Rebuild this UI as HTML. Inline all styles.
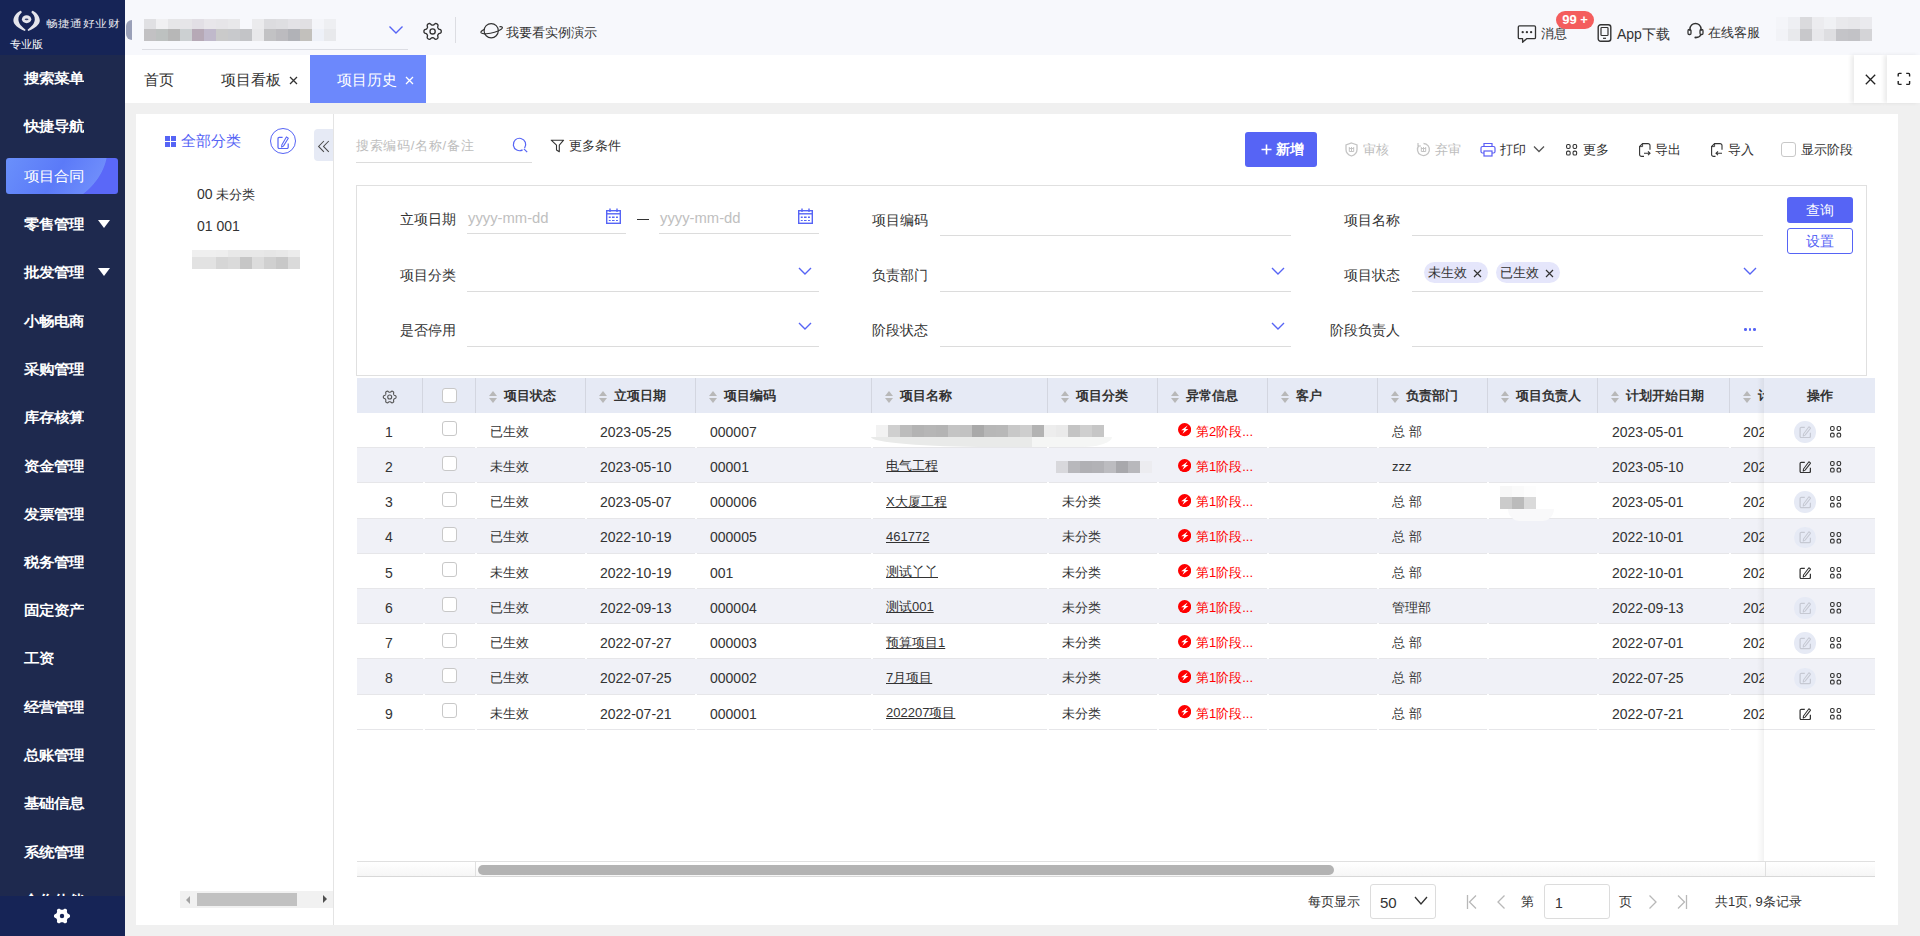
<!DOCTYPE html>
<html><head><meta charset="utf-8"><title>项目历史</title>
<style>
html,body{margin:0;padding:0}
body{width:1920px;height:936px;overflow:hidden;position:relative;background:#f0f0f0;font-family:"Liberation Sans",sans-serif}
.a{position:absolute}
.t{position:absolute;white-space:nowrap}
</style></head><body>
<div class="a" style="left:0px;top:0px;width:125px;height:936px;background:#1e294e"></div>
<div class="a" style="left:0px;top:0px;width:125px;height:55px;background:#162456"></div>
<svg class="a" style="left:12px;top:10px" width="30" height="23" viewBox="0 0 30 23">
<path d="M8 0.9 C5 2.6 1.5 6 1.4 10.6 C1.4 14.5 6 18.5 13 21 L13.6 19.7 C9.5 16.5 6.6 13.5 6.4 9.5 C6.3 6.5 7.8 4 9.6 2.8 C10 1.8 9.2 0.5 8 0.9 Z" fill="#e4e5ec"/>
<path d="M 21.20 0.9 C 24.20 2.6 27.70 6 27.80 10.6 C 27.80 14.5 23.20 18.5 16.20 21 L 15.60 19.7 C 19.70 16.5 22.60 13.5 22.80 9.5 C 22.90 6.5 21.40 4 19.60 2.8 C 19.20 1.8 20.00 0.5 21.20 0.9 Z" fill="#e4e5ec"/>
<ellipse cx="14.6" cy="9.25" rx="4.7" ry="3.9" fill="#e4e5ec"/>
<ellipse cx="14.6" cy="9.3" rx="1.9" ry="0.85" fill="#3a4570"/>
</svg>
<div class="t " style="left:45.5px;top:15.5px;height:16px;line-height:16px;font-size:12.3px;color:#e8e9f0;font-weight:normal;letter-spacing:0.45px;transform:scaleY(0.85);transform-origin:0 50%;">畅捷通好业财</div>
<div class="t " style="left:10px;top:37.0px;height:14px;line-height:14px;font-size:11px;color:#ffffff;font-weight:normal;">专业版</div>
<div class="a" style="left:6px;top:158px;width:112px;height:36px;border-radius:3px;background:radial-gradient(86px 66px at 16px -10px, rgba(88,101,247,0) 99%, #5a68f8 100%),linear-gradient(120deg,#6a90fb 0%,#5b7af8 45%,#7896fc 95%)"></div>
<div class="t " style="left:24px;top:67.8px;height:22px;line-height:22px;font-size:15.3px;color:#ffffff;font-weight:normal;font-weight:bold;transform:scaleY(0.9);transform-origin:0 50%;">搜索菜单</div>
<div class="t " style="left:24px;top:116.175px;height:22px;line-height:22px;font-size:15.3px;color:#ffffff;font-weight:normal;font-weight:bold;transform:scaleY(0.9);transform-origin:0 50%;">快捷导航</div>
<div class="t " style="left:24px;top:164.55px;height:22px;line-height:22px;font-size:15.3px;color:#ffffff;font-weight:normal;font-weight:500;transform:scaleY(0.9);transform-origin:0 50%;">项目合同</div>
<div class="t " style="left:24px;top:212.925px;height:22px;line-height:22px;font-size:15.3px;color:#ffffff;font-weight:normal;font-weight:bold;transform:scaleY(0.9);transform-origin:0 50%;">零售管理</div>
<div class="a" style="left:97.5px;top:219.625px;width:0;height:0;border-left:6px solid transparent;border-right:6px solid transparent;border-top:8.5px solid #fff"></div>
<div class="t " style="left:24px;top:261.3px;height:22px;line-height:22px;font-size:15.3px;color:#ffffff;font-weight:normal;font-weight:bold;transform:scaleY(0.9);transform-origin:0 50%;">批发管理</div>
<div class="a" style="left:97.5px;top:268.0px;width:0;height:0;border-left:6px solid transparent;border-right:6px solid transparent;border-top:8.5px solid #fff"></div>
<div class="t " style="left:24px;top:309.675px;height:22px;line-height:22px;font-size:15.3px;color:#ffffff;font-weight:normal;font-weight:bold;transform:scaleY(0.9);transform-origin:0 50%;">小畅电商</div>
<div class="t " style="left:24px;top:358.05px;height:22px;line-height:22px;font-size:15.3px;color:#ffffff;font-weight:normal;font-weight:bold;transform:scaleY(0.9);transform-origin:0 50%;">采购管理</div>
<div class="t " style="left:24px;top:406.425px;height:22px;line-height:22px;font-size:15.3px;color:#ffffff;font-weight:normal;font-weight:bold;transform:scaleY(0.9);transform-origin:0 50%;">库存核算</div>
<div class="t " style="left:24px;top:454.8px;height:22px;line-height:22px;font-size:15.3px;color:#ffffff;font-weight:normal;font-weight:bold;transform:scaleY(0.9);transform-origin:0 50%;">资金管理</div>
<div class="t " style="left:24px;top:503.17499999999995px;height:22px;line-height:22px;font-size:15.3px;color:#ffffff;font-weight:normal;font-weight:bold;transform:scaleY(0.9);transform-origin:0 50%;">发票管理</div>
<div class="t " style="left:24px;top:551.55px;height:22px;line-height:22px;font-size:15.3px;color:#ffffff;font-weight:normal;font-weight:bold;transform:scaleY(0.9);transform-origin:0 50%;">税务管理</div>
<div class="t " style="left:24px;top:599.925px;height:22px;line-height:22px;font-size:15.3px;color:#ffffff;font-weight:normal;font-weight:bold;transform:scaleY(0.9);transform-origin:0 50%;">固定资产</div>
<div class="t " style="left:24px;top:648.3px;height:22px;line-height:22px;font-size:15.3px;color:#ffffff;font-weight:normal;font-weight:bold;transform:scaleY(0.9);transform-origin:0 50%;">工资</div>
<div class="t " style="left:24px;top:696.675px;height:22px;line-height:22px;font-size:15.3px;color:#ffffff;font-weight:normal;font-weight:bold;transform:scaleY(0.9);transform-origin:0 50%;">经营管理</div>
<div class="t " style="left:24px;top:745.05px;height:22px;line-height:22px;font-size:15.3px;color:#ffffff;font-weight:normal;font-weight:bold;transform:scaleY(0.9);transform-origin:0 50%;">总账管理</div>
<div class="t " style="left:24px;top:793.425px;height:22px;line-height:22px;font-size:15.3px;color:#ffffff;font-weight:normal;font-weight:bold;transform:scaleY(0.9);transform-origin:0 50%;">基础信息</div>
<div class="t " style="left:24px;top:841.8px;height:22px;line-height:22px;font-size:15.3px;color:#ffffff;font-weight:normal;font-weight:bold;transform:scaleY(0.9);transform-origin:0 50%;">系统管理</div>
<div class="t " style="left:24px;top:890.175px;height:22px;line-height:22px;font-size:15.3px;color:#ffffff;font-weight:normal;font-weight:bold;transform:scaleY(0.9);transform-origin:0 50%;">合作伙伴</div>
<div class="a" style="left:0px;top:896px;width:125px;height:40px;background:#162456"></div>
<svg class="a" style="left:53px;top:907.2px" width="18" height="18" viewBox="0 0 18 18"><path fill="#fff" fill-rule="evenodd" d="M17.05 9.00 L17.01 9.56 L16.86 10.10 L16.44 10.58 L15.65 10.91 L15.00 11.18 L14.66 11.52 L14.43 11.89 L14.22 12.26 L14.02 12.64 L13.89 13.10 L13.97 13.80 L14.09 14.65 L13.89 15.26 L13.49 15.66 L13.03 15.97 L12.52 16.22 L11.97 16.36 L11.35 16.23 L10.67 15.71 L10.11 15.28 L9.65 15.17 L9.21 15.15 L8.79 15.15 L8.35 15.17 L7.89 15.28 L7.33 15.71 L6.65 16.23 L6.03 16.36 L5.48 16.22 L4.98 15.97 L4.51 15.66 L4.11 15.26 L3.91 14.65 L4.03 13.80 L4.11 13.10 L3.98 12.64 L3.78 12.26 L3.57 11.89 L3.34 11.52 L3.00 11.18 L2.35 10.91 L1.56 10.58 L1.14 10.10 L0.99 9.56 L0.95 9.00 L0.99 8.44 L1.14 7.90 L1.56 7.42 L2.35 7.09 L3.00 6.82 L3.34 6.48 L3.57 6.11 L3.78 5.74 L3.98 5.36 L4.11 4.90 L4.03 4.20 L3.91 3.35 L4.11 2.74 L4.51 2.34 L4.97 2.03 L5.48 1.78 L6.03 1.64 L6.65 1.77 L7.33 2.29 L7.89 2.72 L8.35 2.83 L8.79 2.85 L9.21 2.85 L9.65 2.83 L10.11 2.72 L10.67 2.29 L11.35 1.77 L11.97 1.64 L12.52 1.78 L13.03 2.03 L13.49 2.34 L13.89 2.74 L14.09 3.35 L13.97 4.20 L13.89 4.90 L14.02 5.36 L14.22 5.74 L14.43 6.11 L14.66 6.48 L15.00 6.82 L15.65 7.09 L16.44 7.42 L16.86 7.90 L17.01 8.44Z M9 6.7 A2.2 2.3 0 1 0 9 11.3 A2.2 2.3 0 1 0 9 6.7Z"/></svg>
<div class="a" style="left:125px;top:0px;width:1795px;height:55px;background:#f7f8fc"></div>
<div class="a" style="left:142px;top:49px;width:266px;height:1px;background:#dcdde3"></div>
<div class="a" style="left:126px;top:20px;width:6px;height:20px;background:#9aa0b8;border-radius:10px 0 0 10px"></div>
<div class="a" style="left:144px;top:18.75px;width:12px;height:10px;background:#e0e0e3"></div>
<div class="a" style="left:144px;top:28.75px;width:12px;height:12px;background:#c2c1c3"></div>
<div class="a" style="left:156px;top:18.75px;width:12px;height:10px;background:#f0f0f2"></div>
<div class="a" style="left:156px;top:28.75px;width:12px;height:12px;background:#bdc1c0"></div>
<div class="a" style="left:168px;top:18.75px;width:12px;height:10px;background:#e6e6e8"></div>
<div class="a" style="left:168px;top:28.75px;width:12px;height:12px;background:#b7b7b7"></div>
<div class="a" style="left:180px;top:18.75px;width:12px;height:10px;background:#e6e5e8"></div>
<div class="a" style="left:180px;top:28.75px;width:12px;height:12px;background:#ccd0d2"></div>
<div class="a" style="left:192px;top:18.75px;width:12px;height:10px;background:#e2dfe5"></div>
<div class="a" style="left:192px;top:28.75px;width:12px;height:12px;background:#b6a9b6"></div>
<div class="a" style="left:204px;top:18.75px;width:12px;height:10px;background:#e8e6ea"></div>
<div class="a" style="left:204px;top:28.75px;width:12px;height:12px;background:#c0b9cb"></div>
<div class="a" style="left:216px;top:18.75px;width:12px;height:10px;background:#e6e5e8"></div>
<div class="a" style="left:216px;top:28.75px;width:12px;height:12px;background:#cacaca"></div>
<div class="a" style="left:228px;top:18.75px;width:12px;height:10px;background:#e8e8ea"></div>
<div class="a" style="left:228px;top:28.75px;width:12px;height:12px;background:#c8c9cc"></div>
<div class="a" style="left:240px;top:18.75px;width:12px;height:10px;background:#f7f8fc"></div>
<div class="a" style="left:240px;top:28.75px;width:12px;height:12px;background:#c3c4c7"></div>
<div class="a" style="left:252px;top:18.75px;width:12px;height:10px;background:#ebebed"></div>
<div class="a" style="left:252px;top:28.75px;width:12px;height:12px;background:#e8e8ea"></div>
<div class="a" style="left:264px;top:18.75px;width:12px;height:10px;background:#dcdcdf"></div>
<div class="a" style="left:264px;top:28.75px;width:12px;height:12px;background:#c2c2c4"></div>
<div class="a" style="left:276px;top:18.75px;width:12px;height:10px;background:#dedee1"></div>
<div class="a" style="left:276px;top:28.75px;width:12px;height:12px;background:#bcbbbf"></div>
<div class="a" style="left:288px;top:18.75px;width:12px;height:10px;background:#e3e2e6"></div>
<div class="a" style="left:288px;top:28.75px;width:12px;height:12px;background:#b1b2b7"></div>
<div class="a" style="left:300px;top:18.75px;width:12px;height:10px;background:#e1e0e3"></div>
<div class="a" style="left:300px;top:28.75px;width:12px;height:12px;background:#c2c0bc"></div>
<div class="a" style="left:312px;top:18.75px;width:12px;height:10px;background:#f4f5f9"></div>
<div class="a" style="left:312px;top:28.75px;width:12px;height:12px;background:#eef1f8"></div>
<div class="a" style="left:324px;top:18.75px;width:12px;height:10px;background:#eeeff2"></div>
<div class="a" style="left:324px;top:28.75px;width:12px;height:12px;background:#e8e9ec"></div>
<svg class="a" style="left:388px;top:25px" width="16" height="10" viewBox="0 0 16 10"><path d="M1.5 1.5 L8 8 L14.5 1.5" fill="none" stroke="#5664f5" stroke-width="1.4"/></svg>
<svg class="a" style="left:423px;top:22px" width="19" height="19" viewBox="0 0 19 19"><path fill="none" stroke="#333" stroke-width="1.35" stroke-linejoin="round" d="M18.25 9.40 L18.21 10.00 L18.03 10.58 L17.54 11.09 L16.59 11.41 L15.83 11.67 L15.46 12.01 L15.21 12.38 L14.99 12.77 L14.79 13.17 L14.68 13.66 L14.83 14.45 L15.03 15.43 L14.84 16.11 L14.42 16.55 L13.93 16.89 L13.38 17.15 L12.79 17.29 L12.11 17.12 L11.36 16.46 L10.75 15.93 L10.27 15.78 L9.82 15.75 L9.38 15.75 L8.93 15.78 L8.45 15.93 L7.84 16.46 L7.09 17.12 L6.41 17.29 L5.82 17.15 L5.28 16.89 L4.78 16.55 L4.36 16.11 L4.17 15.43 L4.37 14.45 L4.52 13.66 L4.41 13.17 L4.21 12.77 L3.99 12.38 L3.74 12.01 L3.37 11.67 L2.61 11.41 L1.66 11.09 L1.17 10.58 L0.99 10.00 L0.95 9.40 L0.99 8.80 L1.17 8.22 L1.66 7.71 L2.61 7.39 L3.37 7.13 L3.74 6.79 L3.99 6.42 L4.21 6.03 L4.41 5.63 L4.52 5.14 L4.37 4.35 L4.17 3.37 L4.36 2.69 L4.78 2.25 L5.27 1.91 L5.82 1.65 L6.41 1.51 L7.09 1.68 L7.84 2.34 L8.45 2.87 L8.93 3.02 L9.38 3.05 L9.82 3.05 L10.27 3.02 L10.75 2.87 L11.36 2.34 L12.11 1.68 L12.79 1.51 L13.38 1.65 L13.93 1.91 L14.42 2.25 L14.84 2.69 L15.03 3.37 L14.83 4.35 L14.68 5.14 L14.79 5.63 L14.99 6.03 L15.21 6.42 L15.46 6.79 L15.83 7.13 L16.59 7.39 L17.54 7.71 L18.03 8.22 L18.21 8.80Z"/><circle cx="9.6" cy="9.4" r="2.6" fill="none" stroke="#333" stroke-width="1.35"/></svg>
<div class="a" style="left:455px;top:17px;width:1px;height:26px;background:#dcdde2"></div>
<svg class="a" style="left:480px;top:22px" width="24" height="19" viewBox="0 0 24 19"><circle cx="11.2" cy="8.7" r="7.1" fill="none" stroke="#333" stroke-width="1.15"/><path d="M4.6 7.4 C1.5 8.6 0.4 10 1.2 10.9 C2.6 12.4 9 12 14.5 10.3 C20 8.6 23.2 6.4 22.2 5.1 C21.8 4.6 20.8 4.5 19.4 4.7" fill="none" stroke="#333" stroke-width="1.15"/></svg>
<div class="t " style="left:506px;top:23.200000000000003px;height:20px;line-height:20px;font-size:13px;color:#333;font-weight:normal;">我要看实例演示</div>
<svg class="a" style="left:1517px;top:25px" width="20" height="19" viewBox="0 0 20 19"><path d="M9.6 13.7H17.3A1.2 1.2 0 0 0 18.5 12.5V2A1.2 1.2 0 0 0 17.3 0.8H2.5A1.2 1.2 0 0 0 1.3 2V12.5A1.2 1.2 0 0 0 2.5 13.7H5.6V17.3Z" fill="none" stroke="#333" stroke-width="1.3" stroke-linejoin="round"/><circle cx="5.7" cy="7.2" r="1.15" fill="#333"/><circle cx="9.9" cy="7.2" r="1.15" fill="#333"/><circle cx="14.1" cy="7.2" r="1.15" fill="#333"/></svg>
<div class="t " style="left:1541px;top:24.0px;height:20px;line-height:20px;font-size:13px;color:#333;font-weight:normal;">消息</div>
<div class="a" style="left:1556px;top:11px;width:38px;height:18px;border-radius:9px;background:#f45d5d;color:#fff;font-size:13px;font-weight:bold;line-height:18px;text-align:center;white-space:nowrap">99 +</div>
<svg class="a" style="left:1597px;top:24px" width="15" height="18" viewBox="0 0 15 18"><rect x="1.2" y="0.8" width="12.6" height="16.4" rx="2.5" fill="none" stroke="#333" stroke-width="1.4"/><rect x="4" y="3.5" width="7" height="8" rx="0.8" fill="none" stroke="#333" stroke-width="1.2"/><path d="M6 14.3h3" stroke="#333" stroke-width="1.2"/></svg>
<div class="t " style="left:1617px;top:24.0px;height:20px;line-height:20px;font-size:14px;color:#333;font-weight:normal;">App下载</div>
<svg class="a" style="left:1687px;top:22px" width="17" height="17" viewBox="0 0 17 17"><path d="M3 9 V7 a5.5 5.5 0 0 1 11 0 V9" fill="none" stroke="#333" stroke-width="1.4"/><rect x="1" y="7.5" width="3" height="5" rx="1.2" fill="none" stroke="#333" stroke-width="1.3"/><rect x="13" y="7.5" width="3" height="5" rx="1.2" fill="none" stroke="#333" stroke-width="1.3"/><path d="M14 12.5 C13 15 11 15.5 9 15.5" fill="none" stroke="#333" stroke-width="1.3"/><circle cx="8.5" cy="15.5" r="1.1" fill="#333"/></svg>
<div class="t " style="left:1708px;top:22.5px;height:20px;line-height:20px;font-size:13px;color:#333;font-weight:normal;">在线客服</div>
<div class="a" style="left:1776px;top:17px;width:12px;height:12px;background:#f4f5f9"></div>
<div class="a" style="left:1776px;top:29px;width:12px;height:12px;background:#f2f3f7"></div>
<div class="a" style="left:1788px;top:17px;width:12px;height:12px;background:#eeeff3"></div>
<div class="a" style="left:1788px;top:29px;width:12px;height:12px;background:#e8e9ec"></div>
<div class="a" style="left:1800px;top:17px;width:12px;height:12px;background:#dadadd"></div>
<div class="a" style="left:1800px;top:29px;width:12px;height:12px;background:#c8c8cb"></div>
<div class="a" style="left:1812px;top:17px;width:12px;height:12px;background:#ececef"></div>
<div class="a" style="left:1812px;top:29px;width:12px;height:12px;background:#e8e8eb"></div>
<div class="a" style="left:1824px;top:17px;width:12px;height:12px;background:#f0f1f4"></div>
<div class="a" style="left:1824px;top:29px;width:12px;height:12px;background:#dedee1"></div>
<div class="a" style="left:1836px;top:17px;width:12px;height:12px;background:#e9e9ec"></div>
<div class="a" style="left:1836px;top:29px;width:12px;height:12px;background:#c4c4c8"></div>
<div class="a" style="left:1848px;top:17px;width:12px;height:12px;background:#e7e7ea"></div>
<div class="a" style="left:1848px;top:29px;width:12px;height:12px;background:#c2c2c6"></div>
<div class="a" style="left:1860px;top:17px;width:12px;height:12px;background:#eaeaee"></div>
<div class="a" style="left:1860px;top:29px;width:12px;height:12px;background:#d4d4d7"></div>
<div class="a" style="left:125px;top:55px;width:1795px;height:48px;background:#ffffff"></div>
<div class="t " style="left:144px;top:69.0px;height:22px;line-height:22px;font-size:15px;color:#333;font-weight:normal;">首页</div>
<div class="t " style="left:221px;top:69.0px;height:22px;line-height:22px;font-size:15px;color:#333;font-weight:normal;">项目看板</div>
<svg class="a" style="left:289px;top:76px" width="9" height="9" viewBox="0 0 9 9"><path d="M1 1L8 8M8 1L1 8" stroke="#333" stroke-width="1.3"/></svg>
<div class="a" style="left:310px;top:55px;width:116px;height:48px;background:#6c88fc"></div>
<div class="t " style="left:337px;top:69.0px;height:22px;line-height:22px;font-size:15px;color:#ffffff;font-weight:normal;">项目历史</div>
<svg class="a" style="left:405px;top:76px" width="9" height="9" viewBox="0 0 9 9"><path d="M1 1L8 8M8 1L1 8" stroke="#fff" stroke-width="1.3"/></svg>
<div class="a" style="left:1854px;top:55px;width:32px;height:48px;background:#fff;box-shadow:-3px 0 4px rgba(0,0,0,0.08)"></div>
<svg class="a" style="left:1865.4px;top:74.4px" width="11" height="11" viewBox="0 0 11 11"><path d="M0.8 0.8L10.2 10.2M10.2 0.8L0.8 10.2" stroke="#222" stroke-width="1.3"/></svg>
<div class="a" style="left:1887px;top:55px;width:33px;height:48px;background:#fff;box-shadow:-3px 0 4px rgba(0,0,0,0.08)"></div>
<svg class="a" style="left:1897px;top:72px" width="14" height="14" viewBox="0 0 14 14"><path d="M1.2 4.6V2.4A1 1 0 0 1 2.2 1.4H4.6M9.2 1.4H11.6A1 1 0 0 1 12.6 2.4V4.6M12.6 9V11.4A1 1 0 0 1 11.6 12.4H9.2M4.6 12.4H2.2A1 1 0 0 1 1.2 11.4V9" fill="none" stroke="#222" stroke-width="1.4"/></svg>
<div class="a" style="left:136px;top:114px;width:197px;height:811px;background:#fff"></div>
<div class="a" style="left:333px;top:114px;width:1px;height:811px;background:#e4e4e4"></div>
<div class="a" style="left:334px;top:114px;width:1564px;height:811px;background:#fff"></div>
<div class="a" style="left:165px;top:136px;width:4.5px;height:4.5px;background:#5664f5"></div>
<div class="a" style="left:171px;top:136px;width:4.5px;height:4.5px;background:#5664f5"></div>
<div class="a" style="left:165px;top:142px;width:4.5px;height:4.5px;background:#5664f5"></div>
<div class="a" style="left:171px;top:142px;width:4.5px;height:4.5px;background:#5664f5"></div>
<div class="t " style="left:181px;top:130.0px;height:22px;line-height:22px;font-size:15px;color:#5664f5;font-weight:normal;">全部分类</div>
<div class="a" style="left:270px;top:128px;width:24px;height:24px;border:1px solid #5664f5;border-radius:50%"></div>
<svg class="a" style="left:276.8px;top:135.5px" width="12.5" height="13" viewBox="0 0 12.5 13"><path d="M5.6 1.3H2.2A1.2 1.2 0 0 0 1 2.5V11.3A1.2 1.2 0 0 0 2.2 12.5H10A1.2 1.2 0 0 0 11.2 11.3V7.4" fill="none" stroke="#5664f5" stroke-width="1.2"/><path d="M9.4 0.9L11.3 2.2L6.4 10.1L4.6 11.1L4.8 9Z" fill="none" stroke="#5664f5" stroke-width="1.05" stroke-linejoin="round"/></svg>
<div class="a" style="left:314px;top:129px;width:19px;height:32px;background:#e6eaf5;border-radius:4px 0 0 4px"></div>
<svg class="a" style="left:317px;top:140px" width="13" height="13" viewBox="0 0 13 13"><path d="M6.9 1L1.6 6.4L6.9 11.8M11.8 1L6.5 6.4L11.8 11.8" fill="none" stroke="#4a4a4a" stroke-width="1.05"/></svg>
<div class="t " style="left:197px;top:183.5px;height:20px;line-height:20px;font-size:13px;color:#333;font-weight:normal;"><span style="font-size:14px">00 </span>未分类</div>
<div class="t " style="left:197px;top:216.0px;height:20px;line-height:20px;font-size:14px;color:#333;font-weight:normal;">01 001</div>
<div class="a" style="left:192px;top:250px;width:12px;height:7px;background:#efefef"></div>
<div class="a" style="left:192px;top:257px;width:12px;height:12px;background:#e2e2e2"></div>
<div class="a" style="left:204px;top:250px;width:12px;height:7px;background:#efefef"></div>
<div class="a" style="left:204px;top:257px;width:12px;height:12px;background:#e2e2e2"></div>
<div class="a" style="left:216px;top:250px;width:12px;height:7px;background:#eeeeee"></div>
<div class="a" style="left:216px;top:257px;width:12px;height:12px;background:#d6d6d6"></div>
<div class="a" style="left:228px;top:250px;width:12px;height:7px;background:#e8e8e8"></div>
<div class="a" style="left:228px;top:257px;width:12px;height:12px;background:#dadada"></div>
<div class="a" style="left:240px;top:250px;width:12px;height:7px;background:#e8e8e8"></div>
<div class="a" style="left:240px;top:257px;width:12px;height:12px;background:#c6c6c6"></div>
<div class="a" style="left:252px;top:250px;width:12px;height:7px;background:#e8e8e8"></div>
<div class="a" style="left:252px;top:257px;width:12px;height:12px;background:#dcdcdc"></div>
<div class="a" style="left:264px;top:250px;width:12px;height:7px;background:#e6e6e6"></div>
<div class="a" style="left:264px;top:257px;width:12px;height:12px;background:#d0d0d0"></div>
<div class="a" style="left:276px;top:250px;width:12px;height:7px;background:#e8e8e8"></div>
<div class="a" style="left:276px;top:257px;width:12px;height:12px;background:#c8c8c8"></div>
<div class="a" style="left:288px;top:250px;width:12px;height:7px;background:#ececec"></div>
<div class="a" style="left:288px;top:257px;width:12px;height:12px;background:#dadada"></div>
<div class="a" style="left:180px;top:891px;width:153px;height:17px;background:#f1f1f1"></div>
<div class="a" style="left:197px;top:893px;width:100px;height:13px;background:#c1c1c1"></div>
<div class="a" style="left:186px;top:896px;width:0;height:0;border-top:4px solid transparent;border-bottom:4px solid transparent;border-right:4px solid #a3a3a3"></div>
<div class="a" style="left:323px;top:895px;width:0;height:0;border-top:4.5px solid transparent;border-bottom:4.5px solid transparent;border-left:4.5px solid #505050"></div>
<div class="t " style="left:356px;top:135.5px;height:20px;line-height:20px;font-size:13px;color:#bdbdbd;font-weight:normal;letter-spacing:0.7px;">搜索编码/名称/备注</div>
<div class="a" style="left:356px;top:162px;width:176px;height:1px;background:#dcdcdc"></div>
<svg class="a" style="left:512px;top:137px" width="17" height="17" viewBox="0 0 17 17"><path d="M10.6 12.87A6.2 6.2 0 1 1 12.58 11.06" fill="none" stroke="#5664f5" stroke-width="1.2"/><path d="M11.9 11.9L15.2 15.2" stroke="#5664f5" stroke-width="1.2"/></svg>
<svg class="a" style="left:550px;top:139px" width="15" height="14" viewBox="0 0 15 14"><path d="M1.2 1.2H13.6L9.3 6.2V12.8L6.5 11V6.2Z" fill="none" stroke="#333" stroke-width="1.1" stroke-linejoin="round"/></svg>
<div class="t " style="left:569px;top:135.5px;height:20px;line-height:20px;font-size:13px;color:#333;font-weight:normal;">更多条件</div>
<div class="a" style="left:1245px;top:132px;width:72px;height:35px;border-radius:3px;background:#5664f5"></div>
<svg class="a" style="left:1261px;top:144px" width="11" height="11" viewBox="0 0 11 11"><path d="M5.5 0.5v10M0.5 5.5h10" stroke="#fff" stroke-width="1.6"/></svg>
<div class="t " style="left:1276px;top:139.5px;height:20px;line-height:20px;font-size:13.5px;color:#fff;font-weight:normal;font-weight:bold;">新增</div>
<svg class="a" style="left:1345px;top:142px" width="13" height="15" viewBox="0 0 13 15"><path d="M6.5 1L12 3v4.5c0 3.5-2.5 5.5-5.5 6.5C3.5 13 1 11 1 7.5V3z" fill="none" stroke="#c4c4c4" stroke-width="1.3"/><path d="M4 6.5h5M4.3 5v4.5h4.4V5M6.5 5v4.5" fill="none" stroke="#c4c4c4" stroke-width="1"/></svg>
<div class="t " style="left:1363px;top:139.5px;height:20px;line-height:20px;font-size:13px;color:#bdbdbd;font-weight:normal;">审核</div>
<svg class="a" style="left:1416px;top:142px" width="15" height="15" viewBox="0 0 15 15"><path d="M3 3.5A6 6 0 1 0 7.5 1.5" fill="none" stroke="#c4c4c4" stroke-width="1.3"/><path d="M2 1v3h3" fill="none" stroke="#c4c4c4" stroke-width="1.2"/><path d="M5 6.5h5M5.3 5v4.5h4.4V5M7.5 5v4.5" fill="none" stroke="#c4c4c4" stroke-width="1"/></svg>
<div class="t " style="left:1435px;top:139.5px;height:20px;line-height:20px;font-size:13px;color:#bdbdbd;font-weight:normal;">弃审</div>
<svg class="a" style="left:1480px;top:142px" width="16" height="15" viewBox="0 0 16 15"><path d="M4 4.5V1.5h8v3" fill="none" stroke="#5b5ef5" stroke-width="1.2"/><rect x="1" y="4.5" width="14" height="6.5" rx="1.5" fill="none" stroke="#5b5ef5" stroke-width="1.2"/><rect x="4" y="9" width="8" height="5" fill="#fff" stroke="#5b5ef5" stroke-width="1.2"/></svg>
<div class="t " style="left:1500px;top:139.5px;height:20px;line-height:20px;font-size:13px;color:#333;font-weight:normal;">打印</div>
<svg class="a" style="left:1533px;top:145px" width="12" height="8" viewBox="0 0 12 8"><path d="M1 1.5L6 6.5L11 1.5" fill="none" stroke="#555" stroke-width="1.3"/></svg>
<svg class="a" style="left:1566px;top:143.5px" width="12" height="12" viewBox="0 0 12 12"><rect x="0.55" y="0.55" width="3.6" height="3.9" rx="1.4" fill="none" stroke="#333" stroke-width="1.1"/><rect x="7.05" y="0.55" width="3.6" height="3.9" rx="1.4" fill="none" stroke="#333" stroke-width="1.1"/><rect x="0.55" y="7.15" width="3.6" height="3.9" rx="1.4" fill="none" stroke="#333" stroke-width="1.1"/><rect x="7.05" y="7.15" width="3.6" height="3.9" rx="1.4" fill="none" stroke="#333" stroke-width="1.1"/></svg>
<div class="t " style="left:1583px;top:139.5px;height:20px;line-height:20px;font-size:13px;color:#333;font-weight:normal;">更多</div>
<svg class="a" style="left:1638.5px;top:143px" width="12" height="14" viewBox="0 0 12 14"><path d="M11 6.8V2.6A2 2 0 0 0 9 0.6H3.6L0.6 3.6V11.4A2 2 0 0 0 2.6 13.4H5" fill="none" stroke="#333" stroke-width="1.1"/><path d="M3.6 0.6V3.6H0.6" fill="none" stroke="#333" stroke-width="0.9"/><path d="M5 10.3H11M9 8.4L11 10.3L9 12.2" fill="none" stroke="#333" stroke-width="1.1"/></svg>
<div class="t " style="left:1655px;top:139.5px;height:20px;line-height:20px;font-size:13px;color:#333;font-weight:normal;">导出</div>
<svg class="a" style="left:1711px;top:143px" width="12" height="14" viewBox="0 0 12 14"><path d="M11 6.8V2.6A2 2 0 0 0 9 0.6H3.6L0.6 3.6V11.4A2 2 0 0 0 2.6 13.4H4.5" fill="none" stroke="#333" stroke-width="1.1"/><path d="M3.6 0.6V3.6H0.6" fill="none" stroke="#333" stroke-width="0.9"/><path d="M11 10.3H5M7 8.4L5 10.3L7 12.2" fill="none" stroke="#333" stroke-width="1.1"/></svg>
<div class="t " style="left:1728px;top:139.5px;height:20px;line-height:20px;font-size:13px;color:#333;font-weight:normal;">导入</div>
<div class="a" style="left:1781px;top:142px;width:15px;height:15px;box-sizing:border-box;border:1px solid #c8c8c8;border-radius:3px;background:#fff"></div>
<div class="t " style="left:1801px;top:139.5px;height:20px;line-height:20px;font-size:13px;color:#333;font-weight:normal;">显示阶段</div>
<div class="a" style="left:356px;top:185px;width:1511px;height:191px;box-sizing:border-box;border:1px solid #e0e0e0"></div>
<div class="t" style="left:336px;width:120px;text-align:right;top:209px;height:20px;line-height:20px;font-size:14px;color:#333">立项日期</div>
<div class="t" style="left:336px;width:120px;text-align:right;top:265px;height:20px;line-height:20px;font-size:14px;color:#333">项目分类</div>
<div class="t" style="left:336px;width:120px;text-align:right;top:320px;height:20px;line-height:20px;font-size:14px;color:#333">是否停用</div>
<div class="t" style="left:808px;width:120px;text-align:right;top:210px;height:20px;line-height:20px;font-size:14px;color:#333">项目编码</div>
<div class="t" style="left:808px;width:120px;text-align:right;top:265px;height:20px;line-height:20px;font-size:14px;color:#333">负责部门</div>
<div class="t" style="left:808px;width:120px;text-align:right;top:320px;height:20px;line-height:20px;font-size:14px;color:#333">阶段状态</div>
<div class="t" style="left:1280px;width:120px;text-align:right;top:210px;height:20px;line-height:20px;font-size:14px;color:#333">项目名称</div>
<div class="t" style="left:1280px;width:120px;text-align:right;top:265px;height:20px;line-height:20px;font-size:14px;color:#333">项目状态</div>
<div class="t" style="left:1280px;width:120px;text-align:right;top:320px;height:20px;line-height:20px;font-size:14px;color:#333">阶段负责人</div>
<div class="t " style="left:468px;top:208.0px;height:20px;line-height:20px;font-size:14.8px;color:#c0c0c0;font-weight:normal;">yyyy-mm-dd</div>
<div class="a" style="left:467px;top:233px;width:159px;height:1px;background:#dcdcdc"></div>
<svg class="a" style="left:606px;top:208px" width="15" height="16" viewBox="0 0 15 16"><rect x="0.7" y="2.7" width="13.6" height="12.6" fill="none" stroke="#5664f5" stroke-width="1.4"/><path d="M0.7 5.8h13.6" stroke="#5664f5" stroke-width="1.4"/><path d="M4 0.5v3.5M11 0.5v3.5" stroke="#5664f5" stroke-width="1.4"/><path d="M2.8 9.2h1.9M6 9.2h2.6M10 9.2h1.9" stroke="#5664f5" stroke-width="1.5"/><path d="M2.8 12.5h1.9M6 12.5h2.6M10 12.5h1.9" stroke="#5664f5" stroke-width="1.1"/></svg>
<div class="a" style="left:637px;top:219px;width:12px;height:1.3px;background:#333"></div>
<div class="t " style="left:660px;top:208.0px;height:20px;line-height:20px;font-size:14.8px;color:#c0c0c0;font-weight:normal;">yyyy-mm-dd</div>
<div class="a" style="left:659px;top:233px;width:160px;height:1px;background:#dcdcdc"></div>
<svg class="a" style="left:798px;top:208px" width="15" height="16" viewBox="0 0 15 16"><rect x="0.7" y="2.7" width="13.6" height="12.6" fill="none" stroke="#5664f5" stroke-width="1.4"/><path d="M0.7 5.8h13.6" stroke="#5664f5" stroke-width="1.4"/><path d="M4 0.5v3.5M11 0.5v3.5" stroke="#5664f5" stroke-width="1.4"/><path d="M2.8 9.2h1.9M6 9.2h2.6M10 9.2h1.9" stroke="#5664f5" stroke-width="1.5"/><path d="M2.8 12.5h1.9M6 12.5h2.6M10 12.5h1.9" stroke="#5664f5" stroke-width="1.1"/></svg>
<div class="a" style="left:467px;top:291px;width:352px;height:1px;background:#dcdcdc"></div>
<div class="a" style="left:467px;top:346px;width:352px;height:1px;background:#dcdcdc"></div>
<div class="a" style="left:940px;top:235px;width:351px;height:1px;background:#dcdcdc"></div>
<div class="a" style="left:940px;top:291px;width:351px;height:1px;background:#dcdcdc"></div>
<div class="a" style="left:940px;top:346px;width:351px;height:1px;background:#dcdcdc"></div>
<div class="a" style="left:1412px;top:235px;width:351px;height:1px;background:#dcdcdc"></div>
<div class="a" style="left:1412px;top:291px;width:351px;height:1px;background:#dcdcdc"></div>
<div class="a" style="left:1412px;top:346px;width:351px;height:1px;background:#dcdcdc"></div>
<svg class="a" style="left:798px;top:267px" width="14" height="8" viewBox="0 0 14 8"><path d="M1 1L7.0 7L13 1" fill="none" stroke="#5664f5" stroke-width="1.4"/></svg>
<svg class="a" style="left:798px;top:322px" width="14" height="8" viewBox="0 0 14 8"><path d="M1 1L7.0 7L13 1" fill="none" stroke="#5664f5" stroke-width="1.4"/></svg>
<svg class="a" style="left:1271px;top:267px" width="14" height="8" viewBox="0 0 14 8"><path d="M1 1L7.0 7L13 1" fill="none" stroke="#5664f5" stroke-width="1.4"/></svg>
<svg class="a" style="left:1271px;top:322px" width="14" height="8" viewBox="0 0 14 8"><path d="M1 1L7.0 7L13 1" fill="none" stroke="#5664f5" stroke-width="1.4"/></svg>
<svg class="a" style="left:1743px;top:267px" width="14" height="8" viewBox="0 0 14 8"><path d="M1 1L7.0 7L13 1" fill="none" stroke="#5664f5" stroke-width="1.4"/></svg>
<div class="a" style="left:1744.0px;top:328px;width:2.5px;height:2.5px;background:#5664f5;border-radius:50%"></div>
<div class="a" style="left:1748.5px;top:328px;width:2.5px;height:2.5px;background:#5664f5;border-radius:50%"></div>
<div class="a" style="left:1753.0px;top:328px;width:2.5px;height:2.5px;background:#5664f5;border-radius:50%"></div>
<div class="a" style="left:1424px;top:262px;width:64px;height:21px;border-radius:11px;background:#e5e6fb"></div>
<div class="t " style="left:1428px;top:262.5px;height:20px;line-height:20px;font-size:13px;color:#333;font-weight:normal;">未生效</div>
<svg class="a" style="left:1472.5px;top:268.5px" width="9" height="9" viewBox="0 0 9 9"><path d="M1 1L8 8M8 1L1 8" stroke="#333" stroke-width="1.2"/></svg>
<div class="a" style="left:1496px;top:262px;width:64px;height:21px;border-radius:11px;background:#e5e6fb"></div>
<div class="t " style="left:1500px;top:262.5px;height:20px;line-height:20px;font-size:13px;color:#333;font-weight:normal;">已生效</div>
<svg class="a" style="left:1544.5px;top:268.5px" width="9" height="9" viewBox="0 0 9 9"><path d="M1 1L8 8M8 1L1 8" stroke="#333" stroke-width="1.2"/></svg>
<div class="a" style="left:1787px;top:197px;width:66px;height:26px;border-radius:3px;background:#5664f5;color:#fff;font-size:13.5px;font-weight:500;line-height:27px;text-align:center">查询</div>
<div class="a" style="left:1787px;top:228px;width:66px;height:26px;box-sizing:border-box;border:1px solid #5664f5;border-radius:3px;background:#fff;color:#5664f5;font-size:13.5px;line-height:25px;text-align:center">设置</div>
<div class="a" style="left:357px;top:378px;width:1518px;height:35px;background:#e6eaf5"></div>
<div class="a" style="left:357px;top:413px;width:1518px;height:35px;background:#ffffff"></div>
<div class="a" style="left:357px;top:447px;width:1518px;height:1px;background:#e6e6e9"></div>
<div class="a" style="left:357px;top:448px;width:1518px;height:35px;background:#f0f1f7"></div>
<div class="a" style="left:357px;top:482px;width:1518px;height:1px;background:#e6e6e9"></div>
<div class="a" style="left:357px;top:483px;width:1518px;height:36px;background:#ffffff"></div>
<div class="a" style="left:357px;top:518px;width:1518px;height:1px;background:#e6e6e9"></div>
<div class="a" style="left:357px;top:519px;width:1518px;height:35px;background:#f0f1f7"></div>
<div class="a" style="left:357px;top:553px;width:1518px;height:1px;background:#e6e6e9"></div>
<div class="a" style="left:357px;top:554px;width:1518px;height:35px;background:#ffffff"></div>
<div class="a" style="left:357px;top:588px;width:1518px;height:1px;background:#e6e6e9"></div>
<div class="a" style="left:357px;top:589px;width:1518px;height:35px;background:#f0f1f7"></div>
<div class="a" style="left:357px;top:623px;width:1518px;height:1px;background:#e6e6e9"></div>
<div class="a" style="left:357px;top:624px;width:1518px;height:35px;background:#ffffff"></div>
<div class="a" style="left:357px;top:658px;width:1518px;height:1px;background:#e6e6e9"></div>
<div class="a" style="left:357px;top:659px;width:1518px;height:36px;background:#f0f1f7"></div>
<div class="a" style="left:357px;top:694px;width:1518px;height:1px;background:#e6e6e9"></div>
<div class="a" style="left:357px;top:695px;width:1518px;height:35px;background:#ffffff"></div>
<div class="a" style="left:357px;top:729px;width:1518px;height:1px;background:#e6e6e9"></div>
<div class="a" style="left:422px;top:378px;width:1px;height:35px;background:#d3d6e0"></div>
<div class="a" style="left:475px;top:378px;width:1px;height:35px;background:#d3d6e0"></div>
<div class="a" style="left:585px;top:378px;width:1px;height:35px;background:#d3d6e0"></div>
<div class="a" style="left:695px;top:378px;width:1px;height:35px;background:#d3d6e0"></div>
<div class="a" style="left:871px;top:378px;width:1px;height:35px;background:#d3d6e0"></div>
<div class="a" style="left:1047px;top:378px;width:1px;height:35px;background:#d3d6e0"></div>
<div class="a" style="left:1157px;top:378px;width:1px;height:35px;background:#d3d6e0"></div>
<div class="a" style="left:1267px;top:378px;width:1px;height:35px;background:#d3d6e0"></div>
<div class="a" style="left:1377px;top:378px;width:1px;height:35px;background:#d3d6e0"></div>
<div class="a" style="left:1487px;top:378px;width:1px;height:35px;background:#d3d6e0"></div>
<div class="a" style="left:1597px;top:378px;width:1px;height:35px;background:#d3d6e0"></div>
<div class="a" style="left:1729px;top:378px;width:1px;height:35px;background:#d3d6e0"></div>
<div class="a" style="left:423px;top:447px;width:1.5px;height:1px;background:#ffffff"></div>
<div class="a" style="left:423px;top:482px;width:1.5px;height:1px;background:#ffffff"></div>
<div class="a" style="left:423px;top:518px;width:1.5px;height:1px;background:#ffffff"></div>
<div class="a" style="left:423px;top:553px;width:1.5px;height:1px;background:#ffffff"></div>
<div class="a" style="left:423px;top:588px;width:1.5px;height:1px;background:#ffffff"></div>
<div class="a" style="left:423px;top:623px;width:1.5px;height:1px;background:#ffffff"></div>
<div class="a" style="left:423px;top:658px;width:1.5px;height:1px;background:#ffffff"></div>
<div class="a" style="left:423px;top:694px;width:1.5px;height:1px;background:#ffffff"></div>
<div class="a" style="left:423px;top:729px;width:1.5px;height:1px;background:#ffffff"></div>
<div class="a" style="left:475px;top:447px;width:1.5px;height:1px;background:#ffffff"></div>
<div class="a" style="left:475px;top:482px;width:1.5px;height:1px;background:#ffffff"></div>
<div class="a" style="left:475px;top:518px;width:1.5px;height:1px;background:#ffffff"></div>
<div class="a" style="left:475px;top:553px;width:1.5px;height:1px;background:#ffffff"></div>
<div class="a" style="left:475px;top:588px;width:1.5px;height:1px;background:#ffffff"></div>
<div class="a" style="left:475px;top:623px;width:1.5px;height:1px;background:#ffffff"></div>
<div class="a" style="left:475px;top:658px;width:1.5px;height:1px;background:#ffffff"></div>
<div class="a" style="left:475px;top:694px;width:1.5px;height:1px;background:#ffffff"></div>
<div class="a" style="left:475px;top:729px;width:1.5px;height:1px;background:#ffffff"></div>
<div class="a" style="left:585px;top:447px;width:1.5px;height:1px;background:#ffffff"></div>
<div class="a" style="left:585px;top:482px;width:1.5px;height:1px;background:#ffffff"></div>
<div class="a" style="left:585px;top:518px;width:1.5px;height:1px;background:#ffffff"></div>
<div class="a" style="left:585px;top:553px;width:1.5px;height:1px;background:#ffffff"></div>
<div class="a" style="left:585px;top:588px;width:1.5px;height:1px;background:#ffffff"></div>
<div class="a" style="left:585px;top:623px;width:1.5px;height:1px;background:#ffffff"></div>
<div class="a" style="left:585px;top:658px;width:1.5px;height:1px;background:#ffffff"></div>
<div class="a" style="left:585px;top:694px;width:1.5px;height:1px;background:#ffffff"></div>
<div class="a" style="left:585px;top:729px;width:1.5px;height:1px;background:#ffffff"></div>
<div class="a" style="left:695px;top:447px;width:1.5px;height:1px;background:#ffffff"></div>
<div class="a" style="left:695px;top:482px;width:1.5px;height:1px;background:#ffffff"></div>
<div class="a" style="left:695px;top:518px;width:1.5px;height:1px;background:#ffffff"></div>
<div class="a" style="left:695px;top:553px;width:1.5px;height:1px;background:#ffffff"></div>
<div class="a" style="left:695px;top:588px;width:1.5px;height:1px;background:#ffffff"></div>
<div class="a" style="left:695px;top:623px;width:1.5px;height:1px;background:#ffffff"></div>
<div class="a" style="left:695px;top:658px;width:1.5px;height:1px;background:#ffffff"></div>
<div class="a" style="left:695px;top:694px;width:1.5px;height:1px;background:#ffffff"></div>
<div class="a" style="left:695px;top:729px;width:1.5px;height:1px;background:#ffffff"></div>
<div class="a" style="left:871px;top:447px;width:1.5px;height:1px;background:#ffffff"></div>
<div class="a" style="left:871px;top:482px;width:1.5px;height:1px;background:#ffffff"></div>
<div class="a" style="left:871px;top:518px;width:1.5px;height:1px;background:#ffffff"></div>
<div class="a" style="left:871px;top:553px;width:1.5px;height:1px;background:#ffffff"></div>
<div class="a" style="left:871px;top:588px;width:1.5px;height:1px;background:#ffffff"></div>
<div class="a" style="left:871px;top:623px;width:1.5px;height:1px;background:#ffffff"></div>
<div class="a" style="left:871px;top:658px;width:1.5px;height:1px;background:#ffffff"></div>
<div class="a" style="left:871px;top:694px;width:1.5px;height:1px;background:#ffffff"></div>
<div class="a" style="left:871px;top:729px;width:1.5px;height:1px;background:#ffffff"></div>
<div class="a" style="left:1047px;top:447px;width:1.5px;height:1px;background:#ffffff"></div>
<div class="a" style="left:1047px;top:482px;width:1.5px;height:1px;background:#ffffff"></div>
<div class="a" style="left:1047px;top:518px;width:1.5px;height:1px;background:#ffffff"></div>
<div class="a" style="left:1047px;top:553px;width:1.5px;height:1px;background:#ffffff"></div>
<div class="a" style="left:1047px;top:588px;width:1.5px;height:1px;background:#ffffff"></div>
<div class="a" style="left:1047px;top:623px;width:1.5px;height:1px;background:#ffffff"></div>
<div class="a" style="left:1047px;top:658px;width:1.5px;height:1px;background:#ffffff"></div>
<div class="a" style="left:1047px;top:694px;width:1.5px;height:1px;background:#ffffff"></div>
<div class="a" style="left:1047px;top:729px;width:1.5px;height:1px;background:#ffffff"></div>
<div class="a" style="left:1157px;top:447px;width:1.5px;height:1px;background:#ffffff"></div>
<div class="a" style="left:1157px;top:482px;width:1.5px;height:1px;background:#ffffff"></div>
<div class="a" style="left:1157px;top:518px;width:1.5px;height:1px;background:#ffffff"></div>
<div class="a" style="left:1157px;top:553px;width:1.5px;height:1px;background:#ffffff"></div>
<div class="a" style="left:1157px;top:588px;width:1.5px;height:1px;background:#ffffff"></div>
<div class="a" style="left:1157px;top:623px;width:1.5px;height:1px;background:#ffffff"></div>
<div class="a" style="left:1157px;top:658px;width:1.5px;height:1px;background:#ffffff"></div>
<div class="a" style="left:1157px;top:694px;width:1.5px;height:1px;background:#ffffff"></div>
<div class="a" style="left:1157px;top:729px;width:1.5px;height:1px;background:#ffffff"></div>
<div class="a" style="left:1267px;top:447px;width:1.5px;height:1px;background:#ffffff"></div>
<div class="a" style="left:1267px;top:482px;width:1.5px;height:1px;background:#ffffff"></div>
<div class="a" style="left:1267px;top:518px;width:1.5px;height:1px;background:#ffffff"></div>
<div class="a" style="left:1267px;top:553px;width:1.5px;height:1px;background:#ffffff"></div>
<div class="a" style="left:1267px;top:588px;width:1.5px;height:1px;background:#ffffff"></div>
<div class="a" style="left:1267px;top:623px;width:1.5px;height:1px;background:#ffffff"></div>
<div class="a" style="left:1267px;top:658px;width:1.5px;height:1px;background:#ffffff"></div>
<div class="a" style="left:1267px;top:694px;width:1.5px;height:1px;background:#ffffff"></div>
<div class="a" style="left:1267px;top:729px;width:1.5px;height:1px;background:#ffffff"></div>
<div class="a" style="left:1377px;top:447px;width:1.5px;height:1px;background:#ffffff"></div>
<div class="a" style="left:1377px;top:482px;width:1.5px;height:1px;background:#ffffff"></div>
<div class="a" style="left:1377px;top:518px;width:1.5px;height:1px;background:#ffffff"></div>
<div class="a" style="left:1377px;top:553px;width:1.5px;height:1px;background:#ffffff"></div>
<div class="a" style="left:1377px;top:588px;width:1.5px;height:1px;background:#ffffff"></div>
<div class="a" style="left:1377px;top:623px;width:1.5px;height:1px;background:#ffffff"></div>
<div class="a" style="left:1377px;top:658px;width:1.5px;height:1px;background:#ffffff"></div>
<div class="a" style="left:1377px;top:694px;width:1.5px;height:1px;background:#ffffff"></div>
<div class="a" style="left:1377px;top:729px;width:1.5px;height:1px;background:#ffffff"></div>
<div class="a" style="left:1487px;top:447px;width:1.5px;height:1px;background:#ffffff"></div>
<div class="a" style="left:1487px;top:482px;width:1.5px;height:1px;background:#ffffff"></div>
<div class="a" style="left:1487px;top:518px;width:1.5px;height:1px;background:#ffffff"></div>
<div class="a" style="left:1487px;top:553px;width:1.5px;height:1px;background:#ffffff"></div>
<div class="a" style="left:1487px;top:588px;width:1.5px;height:1px;background:#ffffff"></div>
<div class="a" style="left:1487px;top:623px;width:1.5px;height:1px;background:#ffffff"></div>
<div class="a" style="left:1487px;top:658px;width:1.5px;height:1px;background:#ffffff"></div>
<div class="a" style="left:1487px;top:694px;width:1.5px;height:1px;background:#ffffff"></div>
<div class="a" style="left:1487px;top:729px;width:1.5px;height:1px;background:#ffffff"></div>
<div class="a" style="left:1597px;top:447px;width:1.5px;height:1px;background:#ffffff"></div>
<div class="a" style="left:1597px;top:482px;width:1.5px;height:1px;background:#ffffff"></div>
<div class="a" style="left:1597px;top:518px;width:1.5px;height:1px;background:#ffffff"></div>
<div class="a" style="left:1597px;top:553px;width:1.5px;height:1px;background:#ffffff"></div>
<div class="a" style="left:1597px;top:588px;width:1.5px;height:1px;background:#ffffff"></div>
<div class="a" style="left:1597px;top:623px;width:1.5px;height:1px;background:#ffffff"></div>
<div class="a" style="left:1597px;top:658px;width:1.5px;height:1px;background:#ffffff"></div>
<div class="a" style="left:1597px;top:694px;width:1.5px;height:1px;background:#ffffff"></div>
<div class="a" style="left:1597px;top:729px;width:1.5px;height:1px;background:#ffffff"></div>
<div class="a" style="left:1729px;top:447px;width:1.5px;height:1px;background:#ffffff"></div>
<div class="a" style="left:1729px;top:482px;width:1.5px;height:1px;background:#ffffff"></div>
<div class="a" style="left:1729px;top:518px;width:1.5px;height:1px;background:#ffffff"></div>
<div class="a" style="left:1729px;top:553px;width:1.5px;height:1px;background:#ffffff"></div>
<div class="a" style="left:1729px;top:588px;width:1.5px;height:1px;background:#ffffff"></div>
<div class="a" style="left:1729px;top:623px;width:1.5px;height:1px;background:#ffffff"></div>
<div class="a" style="left:1729px;top:658px;width:1.5px;height:1px;background:#ffffff"></div>
<div class="a" style="left:1729px;top:694px;width:1.5px;height:1px;background:#ffffff"></div>
<div class="a" style="left:1729px;top:729px;width:1.5px;height:1px;background:#ffffff"></div>
<svg class="a" style="left:382px;top:389px" width="15" height="15" viewBox="0 0 15 15"><path fill="none" stroke="#555" stroke-width="1.1" stroke-linejoin="round" d="M14.10 8.00 L14.07 8.45 L13.94 8.88 L13.60 9.25 L12.93 9.50 L12.39 9.71 L12.12 9.97 L11.94 10.26 L11.77 10.55 L11.62 10.85 L11.53 11.21 L11.62 11.78 L11.73 12.48 L11.58 12.97 L11.27 13.29 L10.90 13.54 L10.50 13.74 L10.06 13.85 L9.56 13.73 L9.02 13.28 L8.57 12.92 L8.21 12.82 L7.87 12.80 L7.53 12.80 L7.19 12.82 L6.83 12.92 L6.38 13.28 L5.84 13.73 L5.34 13.85 L4.90 13.74 L4.50 13.54 L4.13 13.29 L3.82 12.97 L3.67 12.48 L3.78 11.78 L3.87 11.21 L3.78 10.85 L3.63 10.55 L3.46 10.26 L3.28 9.97 L3.01 9.71 L2.47 9.50 L1.80 9.25 L1.46 8.88 L1.33 8.45 L1.30 8.00 L1.33 7.55 L1.46 7.12 L1.80 6.75 L2.47 6.50 L3.01 6.29 L3.28 6.03 L3.46 5.74 L3.63 5.45 L3.78 5.15 L3.87 4.79 L3.78 4.22 L3.67 3.52 L3.82 3.03 L4.13 2.71 L4.50 2.46 L4.90 2.26 L5.34 2.15 L5.84 2.27 L6.38 2.72 L6.83 3.08 L7.19 3.18 L7.53 3.20 L7.87 3.20 L8.21 3.18 L8.57 3.08 L9.02 2.72 L9.56 2.27 L10.06 2.15 L10.50 2.26 L10.90 2.46 L11.27 2.71 L11.58 3.03 L11.73 3.52 L11.62 4.22 L11.53 4.79 L11.62 5.15 L11.77 5.45 L11.94 5.74 L12.12 6.03 L12.39 6.29 L12.93 6.50 L13.60 6.75 L13.94 7.12 L14.07 7.55Z"/><circle cx="7.7" cy="8" r="2" fill="none" stroke="#555" stroke-width="1.1"/></svg>
<div class="a" style="left:442px;top:388px;width:15px;height:15px;box-sizing:border-box;border:1px solid #c8c8c8;border-radius:3px;background:#fff"></div>
<div class="a" style="left:489px;top:391px;width:0;height:0;border-left:4px solid transparent;border-right:4px solid transparent;border-bottom:5px solid #b8b8b8"></div>
<div class="a" style="left:489px;top:398px;width:0;height:0;border-left:4px solid transparent;border-right:4px solid transparent;border-top:5px solid #b8b8b8"></div>
<div class="t " style="left:504px;top:386.0px;height:20px;line-height:20px;font-size:13px;color:#333;font-weight:normal;font-weight:bold;">项目状态</div>
<div class="a" style="left:599px;top:391px;width:0;height:0;border-left:4px solid transparent;border-right:4px solid transparent;border-bottom:5px solid #b8b8b8"></div>
<div class="a" style="left:599px;top:398px;width:0;height:0;border-left:4px solid transparent;border-right:4px solid transparent;border-top:5px solid #b8b8b8"></div>
<div class="t " style="left:614px;top:386.0px;height:20px;line-height:20px;font-size:13px;color:#333;font-weight:normal;font-weight:bold;">立项日期</div>
<div class="a" style="left:709px;top:391px;width:0;height:0;border-left:4px solid transparent;border-right:4px solid transparent;border-bottom:5px solid #b8b8b8"></div>
<div class="a" style="left:709px;top:398px;width:0;height:0;border-left:4px solid transparent;border-right:4px solid transparent;border-top:5px solid #b8b8b8"></div>
<div class="t " style="left:724px;top:386.0px;height:20px;line-height:20px;font-size:13px;color:#333;font-weight:normal;font-weight:bold;">项目编码</div>
<div class="a" style="left:885px;top:391px;width:0;height:0;border-left:4px solid transparent;border-right:4px solid transparent;border-bottom:5px solid #b8b8b8"></div>
<div class="a" style="left:885px;top:398px;width:0;height:0;border-left:4px solid transparent;border-right:4px solid transparent;border-top:5px solid #b8b8b8"></div>
<div class="t " style="left:900px;top:386.0px;height:20px;line-height:20px;font-size:13px;color:#333;font-weight:normal;font-weight:bold;">项目名称</div>
<div class="a" style="left:1061px;top:391px;width:0;height:0;border-left:4px solid transparent;border-right:4px solid transparent;border-bottom:5px solid #b8b8b8"></div>
<div class="a" style="left:1061px;top:398px;width:0;height:0;border-left:4px solid transparent;border-right:4px solid transparent;border-top:5px solid #b8b8b8"></div>
<div class="t " style="left:1076px;top:386.0px;height:20px;line-height:20px;font-size:13px;color:#333;font-weight:normal;font-weight:bold;">项目分类</div>
<div class="a" style="left:1171px;top:391px;width:0;height:0;border-left:4px solid transparent;border-right:4px solid transparent;border-bottom:5px solid #b8b8b8"></div>
<div class="a" style="left:1171px;top:398px;width:0;height:0;border-left:4px solid transparent;border-right:4px solid transparent;border-top:5px solid #b8b8b8"></div>
<div class="t " style="left:1186px;top:386.0px;height:20px;line-height:20px;font-size:13px;color:#333;font-weight:normal;font-weight:bold;">异常信息</div>
<div class="a" style="left:1281px;top:391px;width:0;height:0;border-left:4px solid transparent;border-right:4px solid transparent;border-bottom:5px solid #b8b8b8"></div>
<div class="a" style="left:1281px;top:398px;width:0;height:0;border-left:4px solid transparent;border-right:4px solid transparent;border-top:5px solid #b8b8b8"></div>
<div class="t " style="left:1296px;top:386.0px;height:20px;line-height:20px;font-size:13px;color:#333;font-weight:normal;font-weight:bold;">客户</div>
<div class="a" style="left:1391px;top:391px;width:0;height:0;border-left:4px solid transparent;border-right:4px solid transparent;border-bottom:5px solid #b8b8b8"></div>
<div class="a" style="left:1391px;top:398px;width:0;height:0;border-left:4px solid transparent;border-right:4px solid transparent;border-top:5px solid #b8b8b8"></div>
<div class="t " style="left:1406px;top:386.0px;height:20px;line-height:20px;font-size:13px;color:#333;font-weight:normal;font-weight:bold;">负责部门</div>
<div class="a" style="left:1501px;top:391px;width:0;height:0;border-left:4px solid transparent;border-right:4px solid transparent;border-bottom:5px solid #b8b8b8"></div>
<div class="a" style="left:1501px;top:398px;width:0;height:0;border-left:4px solid transparent;border-right:4px solid transparent;border-top:5px solid #b8b8b8"></div>
<div class="t " style="left:1516px;top:386.0px;height:20px;line-height:20px;font-size:13px;color:#333;font-weight:normal;font-weight:bold;">项目负责人</div>
<div class="a" style="left:1611px;top:391px;width:0;height:0;border-left:4px solid transparent;border-right:4px solid transparent;border-bottom:5px solid #b8b8b8"></div>
<div class="a" style="left:1611px;top:398px;width:0;height:0;border-left:4px solid transparent;border-right:4px solid transparent;border-top:5px solid #b8b8b8"></div>
<div class="t " style="left:1626px;top:386.0px;height:20px;line-height:20px;font-size:13px;color:#333;font-weight:normal;font-weight:bold;">计划开始日期</div>
<div class="a" style="left:1743px;top:391px;width:0;height:0;border-left:4px solid transparent;border-right:4px solid transparent;border-bottom:5px solid #b8b8b8"></div>
<div class="a" style="left:1743px;top:398px;width:0;height:0;border-left:4px solid transparent;border-right:4px solid transparent;border-top:5px solid #b8b8b8"></div>
<div class="t " style="left:1758px;top:386.0px;height:20px;line-height:20px;font-size:13px;color:#333;font-weight:normal;font-weight:bold;">计划结束日期</div>
<div class="a" style="left:1764px;top:378px;width:111px;height:35px;background:#e6eaf5"></div>
<div class="t " style="left:1806.5px;top:386.0px;height:20px;line-height:20px;font-size:13px;color:#333;font-weight:normal;font-weight:bold;">操作</div>
<div class="a" style="left:1764px;top:413px;width:111px;height:35px;background:#ffffff"></div>
<div class="a" style="left:1764px;top:447px;width:111px;height:1px;background:#e6e6e9"></div>
<div class="t " style="left:385px;top:421.6px;height:20px;line-height:20px;font-size:14px;color:#333;font-weight:normal;">1</div>
<div class="a" style="left:442px;top:421px;width:15px;height:15px;box-sizing:border-box;border:1px solid #c8c8c8;border-radius:3px;background:#fff"></div>
<div class="t " style="left:490px;top:421.6px;height:20px;line-height:20px;font-size:13px;color:#333;font-weight:normal;">已生效</div>
<div class="t " style="left:600px;top:421.6px;height:20px;line-height:20px;font-size:14px;color:#333;font-weight:normal;">2023-05-25</div>
<div class="t " style="left:710px;top:421.6px;height:20px;line-height:20px;font-size:14px;color:#333;font-weight:normal;">000007</div>
<svg class="a" style="left:1177.7px;top:423.40000000000003px" width="13.2" height="13.2" viewBox="0 0 13.2 13.2"><circle cx="6.6" cy="6.6" r="6.6" fill="#ff0000"/><path d="M9.6 2.6L3.2 7.3H6.2L4.5 10.8L10.4 5.9H7.4Z" fill="#fff"/></svg>
<div class="t " style="left:1196px;top:421.6px;height:20px;line-height:20px;font-size:13px;color:#ff0000;font-weight:normal;">第2阶段...</div>
<div class="t " style="left:1392px;top:421.6px;height:20px;line-height:20px;font-size:13px;color:#333;font-weight:normal;">总 部</div>
<div class="t " style="left:1612px;top:421.6px;height:20px;line-height:20px;font-size:14px;color:#333;font-weight:normal;">2023-05-01</div>
<div class="t" style="left:1743px;top:421.6px;width:21px;overflow:hidden;height:20px;line-height:20px;font-size:14px;color:#333">2022</div>
<div class="a" style="left:1794px;top:420.90000000000003px;width:21.7px;height:21.7px;border-radius:50%;background:#e6eaf5"></div>
<svg class="a" style="left:1798.6px;top:425.6px" width="12.5" height="12.5" viewBox="0 0 12.5 12.5"><path d="M5.8 1.3H2.4A1.3 1.3 0 0 0 1.1 2.6V10.3A1.3 1.3 0 0 0 2.4 11.6H10.1A1.3 1.3 0 0 0 11.4 10.3V6.8" fill="none" stroke="#c6c9d3" stroke-width="1.25"/><path d="M9.9 0.7L11.6 2.1L6.1 9.1L4.2 10.1L4.5 8Z" fill="none" stroke="#c6c9d3" stroke-width="1.05" stroke-linejoin="round"/></svg>
<svg class="a" style="left:1829.5px;top:425.90000000000003px" width="12" height="12" viewBox="0 0 12 12"><rect x="0.55" y="0.55" width="3.6" height="3.9" rx="1.4" fill="none" stroke="#333" stroke-width="1.1"/><rect x="7.05" y="0.55" width="3.6" height="3.9" rx="1.4" fill="none" stroke="#333" stroke-width="1.1"/><rect x="0.55" y="7.15" width="3.6" height="3.9" rx="1.4" fill="none" stroke="#333" stroke-width="1.1"/><rect x="7.05" y="7.15" width="3.6" height="3.9" rx="1.4" fill="none" stroke="#333" stroke-width="1.1"/></svg>
<div class="a" style="left:1764px;top:448px;width:111px;height:35px;background:#f0f1f7"></div>
<div class="a" style="left:1764px;top:482px;width:111px;height:1px;background:#e6e6e9"></div>
<div class="t " style="left:385px;top:456.85px;height:20px;line-height:20px;font-size:14px;color:#333;font-weight:normal;">2</div>
<div class="a" style="left:442px;top:456px;width:15px;height:15px;box-sizing:border-box;border:1px solid #c8c8c8;border-radius:3px;background:#fff"></div>
<div class="t " style="left:490px;top:456.85px;height:20px;line-height:20px;font-size:13px;color:#333;font-weight:normal;">未生效</div>
<div class="t " style="left:600px;top:456.85px;height:20px;line-height:20px;font-size:14px;color:#333;font-weight:normal;">2023-05-10</div>
<div class="t " style="left:710px;top:456.85px;height:20px;line-height:20px;font-size:14px;color:#333;font-weight:normal;">00001</div>
<div class="t " style="left:886px;top:456.35px;height:20px;line-height:20px;font-size:13px;color:#333;font-weight:normal;text-decoration:underline;">电气工程</div>
<svg class="a" style="left:1177.7px;top:458.65000000000003px" width="13.2" height="13.2" viewBox="0 0 13.2 13.2"><circle cx="6.6" cy="6.6" r="6.6" fill="#ff0000"/><path d="M9.6 2.6L3.2 7.3H6.2L4.5 10.8L10.4 5.9H7.4Z" fill="#fff"/></svg>
<div class="t " style="left:1196px;top:456.85px;height:20px;line-height:20px;font-size:13px;color:#ff0000;font-weight:normal;">第1阶段...</div>
<div class="t " style="left:1392px;top:456.85px;height:20px;line-height:20px;font-size:13px;color:#333;font-weight:normal;">zzz</div>
<div class="t " style="left:1612px;top:456.85px;height:20px;line-height:20px;font-size:14px;color:#333;font-weight:normal;">2023-05-10</div>
<div class="t" style="left:1743px;top:456.85px;width:21px;overflow:hidden;height:20px;line-height:20px;font-size:14px;color:#333">2022</div>
<svg class="a" style="left:1798.6px;top:460.85px" width="12.5" height="12.5" viewBox="0 0 12.5 12.5"><path d="M5.8 1.3H2.4A1.3 1.3 0 0 0 1.1 2.6V10.3A1.3 1.3 0 0 0 2.4 11.6H10.1A1.3 1.3 0 0 0 11.4 10.3V6.8" fill="none" stroke="#333" stroke-width="1.25"/><path d="M9.9 0.7L11.6 2.1L6.1 9.1L4.2 10.1L4.5 8Z" fill="none" stroke="#333" stroke-width="1.05" stroke-linejoin="round"/></svg>
<svg class="a" style="left:1829.5px;top:461.15000000000003px" width="12" height="12" viewBox="0 0 12 12"><rect x="0.55" y="0.55" width="3.6" height="3.9" rx="1.4" fill="none" stroke="#333" stroke-width="1.1"/><rect x="7.05" y="0.55" width="3.6" height="3.9" rx="1.4" fill="none" stroke="#333" stroke-width="1.1"/><rect x="0.55" y="7.15" width="3.6" height="3.9" rx="1.4" fill="none" stroke="#333" stroke-width="1.1"/><rect x="7.05" y="7.15" width="3.6" height="3.9" rx="1.4" fill="none" stroke="#333" stroke-width="1.1"/></svg>
<div class="a" style="left:1764px;top:483px;width:111px;height:36px;background:#ffffff"></div>
<div class="a" style="left:1764px;top:518px;width:111px;height:1px;background:#e6e6e9"></div>
<div class="t " style="left:385px;top:492.1px;height:20px;line-height:20px;font-size:14px;color:#333;font-weight:normal;">3</div>
<div class="a" style="left:442px;top:492px;width:15px;height:15px;box-sizing:border-box;border:1px solid #c8c8c8;border-radius:3px;background:#fff"></div>
<div class="t " style="left:490px;top:492.1px;height:20px;line-height:20px;font-size:13px;color:#333;font-weight:normal;">已生效</div>
<div class="t " style="left:600px;top:492.1px;height:20px;line-height:20px;font-size:14px;color:#333;font-weight:normal;">2023-05-07</div>
<div class="t " style="left:710px;top:492.1px;height:20px;line-height:20px;font-size:14px;color:#333;font-weight:normal;">000006</div>
<div class="t " style="left:886px;top:491.6px;height:20px;line-height:20px;font-size:13px;color:#333;font-weight:normal;text-decoration:underline;">X大厦工程</div>
<div class="t " style="left:1062px;top:492.1px;height:20px;line-height:20px;font-size:13px;color:#333;font-weight:normal;">未分类</div>
<svg class="a" style="left:1177.7px;top:493.90000000000003px" width="13.2" height="13.2" viewBox="0 0 13.2 13.2"><circle cx="6.6" cy="6.6" r="6.6" fill="#ff0000"/><path d="M9.6 2.6L3.2 7.3H6.2L4.5 10.8L10.4 5.9H7.4Z" fill="#fff"/></svg>
<div class="t " style="left:1196px;top:492.1px;height:20px;line-height:20px;font-size:13px;color:#ff0000;font-weight:normal;">第1阶段...</div>
<div class="t " style="left:1392px;top:492.1px;height:20px;line-height:20px;font-size:13px;color:#333;font-weight:normal;">总 部</div>
<div class="t " style="left:1612px;top:492.1px;height:20px;line-height:20px;font-size:14px;color:#333;font-weight:normal;">2023-05-01</div>
<div class="t" style="left:1743px;top:492.1px;width:21px;overflow:hidden;height:20px;line-height:20px;font-size:14px;color:#333">2022</div>
<div class="a" style="left:1794px;top:491.40000000000003px;width:21.7px;height:21.7px;border-radius:50%;background:#e6eaf5"></div>
<svg class="a" style="left:1798.6px;top:496.1px" width="12.5" height="12.5" viewBox="0 0 12.5 12.5"><path d="M5.8 1.3H2.4A1.3 1.3 0 0 0 1.1 2.6V10.3A1.3 1.3 0 0 0 2.4 11.6H10.1A1.3 1.3 0 0 0 11.4 10.3V6.8" fill="none" stroke="#c6c9d3" stroke-width="1.25"/><path d="M9.9 0.7L11.6 2.1L6.1 9.1L4.2 10.1L4.5 8Z" fill="none" stroke="#c6c9d3" stroke-width="1.05" stroke-linejoin="round"/></svg>
<svg class="a" style="left:1829.5px;top:496.40000000000003px" width="12" height="12" viewBox="0 0 12 12"><rect x="0.55" y="0.55" width="3.6" height="3.9" rx="1.4" fill="none" stroke="#333" stroke-width="1.1"/><rect x="7.05" y="0.55" width="3.6" height="3.9" rx="1.4" fill="none" stroke="#333" stroke-width="1.1"/><rect x="0.55" y="7.15" width="3.6" height="3.9" rx="1.4" fill="none" stroke="#333" stroke-width="1.1"/><rect x="7.05" y="7.15" width="3.6" height="3.9" rx="1.4" fill="none" stroke="#333" stroke-width="1.1"/></svg>
<div class="a" style="left:1764px;top:519px;width:111px;height:35px;background:#f0f1f7"></div>
<div class="a" style="left:1764px;top:553px;width:111px;height:1px;background:#e6e6e9"></div>
<div class="t " style="left:385px;top:527.35px;height:20px;line-height:20px;font-size:14px;color:#333;font-weight:normal;">4</div>
<div class="a" style="left:442px;top:527px;width:15px;height:15px;box-sizing:border-box;border:1px solid #c8c8c8;border-radius:3px;background:#fff"></div>
<div class="t " style="left:490px;top:527.35px;height:20px;line-height:20px;font-size:13px;color:#333;font-weight:normal;">已生效</div>
<div class="t " style="left:600px;top:527.35px;height:20px;line-height:20px;font-size:14px;color:#333;font-weight:normal;">2022-10-19</div>
<div class="t " style="left:710px;top:527.35px;height:20px;line-height:20px;font-size:14px;color:#333;font-weight:normal;">000005</div>
<div class="t " style="left:886px;top:526.85px;height:20px;line-height:20px;font-size:13px;color:#333;font-weight:normal;text-decoration:underline;">461772</div>
<div class="t " style="left:1062px;top:527.35px;height:20px;line-height:20px;font-size:13px;color:#333;font-weight:normal;">未分类</div>
<svg class="a" style="left:1177.7px;top:529.15px" width="13.2" height="13.2" viewBox="0 0 13.2 13.2"><circle cx="6.6" cy="6.6" r="6.6" fill="#ff0000"/><path d="M9.6 2.6L3.2 7.3H6.2L4.5 10.8L10.4 5.9H7.4Z" fill="#fff"/></svg>
<div class="t " style="left:1196px;top:527.35px;height:20px;line-height:20px;font-size:13px;color:#ff0000;font-weight:normal;">第1阶段...</div>
<div class="t " style="left:1392px;top:527.35px;height:20px;line-height:20px;font-size:13px;color:#333;font-weight:normal;">总 部</div>
<div class="t " style="left:1612px;top:527.35px;height:20px;line-height:20px;font-size:14px;color:#333;font-weight:normal;">2022-10-01</div>
<div class="t" style="left:1743px;top:527.35px;width:21px;overflow:hidden;height:20px;line-height:20px;font-size:14px;color:#333">2022</div>
<div class="a" style="left:1794px;top:526.65px;width:21.7px;height:21.7px;border-radius:50%;background:#e6eaf5"></div>
<svg class="a" style="left:1798.6px;top:531.35px" width="12.5" height="12.5" viewBox="0 0 12.5 12.5"><path d="M5.8 1.3H2.4A1.3 1.3 0 0 0 1.1 2.6V10.3A1.3 1.3 0 0 0 2.4 11.6H10.1A1.3 1.3 0 0 0 11.4 10.3V6.8" fill="none" stroke="#c6c9d3" stroke-width="1.25"/><path d="M9.9 0.7L11.6 2.1L6.1 9.1L4.2 10.1L4.5 8Z" fill="none" stroke="#c6c9d3" stroke-width="1.05" stroke-linejoin="round"/></svg>
<svg class="a" style="left:1829.5px;top:531.65px" width="12" height="12" viewBox="0 0 12 12"><rect x="0.55" y="0.55" width="3.6" height="3.9" rx="1.4" fill="none" stroke="#333" stroke-width="1.1"/><rect x="7.05" y="0.55" width="3.6" height="3.9" rx="1.4" fill="none" stroke="#333" stroke-width="1.1"/><rect x="0.55" y="7.15" width="3.6" height="3.9" rx="1.4" fill="none" stroke="#333" stroke-width="1.1"/><rect x="7.05" y="7.15" width="3.6" height="3.9" rx="1.4" fill="none" stroke="#333" stroke-width="1.1"/></svg>
<div class="a" style="left:1764px;top:554px;width:111px;height:35px;background:#ffffff"></div>
<div class="a" style="left:1764px;top:588px;width:111px;height:1px;background:#e6e6e9"></div>
<div class="t " style="left:385px;top:562.6px;height:20px;line-height:20px;font-size:14px;color:#333;font-weight:normal;">5</div>
<div class="a" style="left:442px;top:562px;width:15px;height:15px;box-sizing:border-box;border:1px solid #c8c8c8;border-radius:3px;background:#fff"></div>
<div class="t " style="left:490px;top:562.6px;height:20px;line-height:20px;font-size:13px;color:#333;font-weight:normal;">未生效</div>
<div class="t " style="left:600px;top:562.6px;height:20px;line-height:20px;font-size:14px;color:#333;font-weight:normal;">2022-10-19</div>
<div class="t " style="left:710px;top:562.6px;height:20px;line-height:20px;font-size:14px;color:#333;font-weight:normal;">001</div>
<div class="t " style="left:886px;top:562.1px;height:20px;line-height:20px;font-size:13px;color:#333;font-weight:normal;text-decoration:underline;">测试丫丫</div>
<div class="t " style="left:1062px;top:562.6px;height:20px;line-height:20px;font-size:13px;color:#333;font-weight:normal;">未分类</div>
<svg class="a" style="left:1177.7px;top:564.4px" width="13.2" height="13.2" viewBox="0 0 13.2 13.2"><circle cx="6.6" cy="6.6" r="6.6" fill="#ff0000"/><path d="M9.6 2.6L3.2 7.3H6.2L4.5 10.8L10.4 5.9H7.4Z" fill="#fff"/></svg>
<div class="t " style="left:1196px;top:562.6px;height:20px;line-height:20px;font-size:13px;color:#ff0000;font-weight:normal;">第1阶段...</div>
<div class="t " style="left:1392px;top:562.6px;height:20px;line-height:20px;font-size:13px;color:#333;font-weight:normal;">总 部</div>
<div class="t " style="left:1612px;top:562.6px;height:20px;line-height:20px;font-size:14px;color:#333;font-weight:normal;">2022-10-01</div>
<div class="t" style="left:1743px;top:562.6px;width:21px;overflow:hidden;height:20px;line-height:20px;font-size:14px;color:#333">2022</div>
<svg class="a" style="left:1798.6px;top:566.6px" width="12.5" height="12.5" viewBox="0 0 12.5 12.5"><path d="M5.8 1.3H2.4A1.3 1.3 0 0 0 1.1 2.6V10.3A1.3 1.3 0 0 0 2.4 11.6H10.1A1.3 1.3 0 0 0 11.4 10.3V6.8" fill="none" stroke="#333" stroke-width="1.25"/><path d="M9.9 0.7L11.6 2.1L6.1 9.1L4.2 10.1L4.5 8Z" fill="none" stroke="#333" stroke-width="1.05" stroke-linejoin="round"/></svg>
<svg class="a" style="left:1829.5px;top:566.9px" width="12" height="12" viewBox="0 0 12 12"><rect x="0.55" y="0.55" width="3.6" height="3.9" rx="1.4" fill="none" stroke="#333" stroke-width="1.1"/><rect x="7.05" y="0.55" width="3.6" height="3.9" rx="1.4" fill="none" stroke="#333" stroke-width="1.1"/><rect x="0.55" y="7.15" width="3.6" height="3.9" rx="1.4" fill="none" stroke="#333" stroke-width="1.1"/><rect x="7.05" y="7.15" width="3.6" height="3.9" rx="1.4" fill="none" stroke="#333" stroke-width="1.1"/></svg>
<div class="a" style="left:1764px;top:589px;width:111px;height:35px;background:#f0f1f7"></div>
<div class="a" style="left:1764px;top:623px;width:111px;height:1px;background:#e6e6e9"></div>
<div class="t " style="left:385px;top:597.85px;height:20px;line-height:20px;font-size:14px;color:#333;font-weight:normal;">6</div>
<div class="a" style="left:442px;top:597px;width:15px;height:15px;box-sizing:border-box;border:1px solid #c8c8c8;border-radius:3px;background:#fff"></div>
<div class="t " style="left:490px;top:597.85px;height:20px;line-height:20px;font-size:13px;color:#333;font-weight:normal;">已生效</div>
<div class="t " style="left:600px;top:597.85px;height:20px;line-height:20px;font-size:14px;color:#333;font-weight:normal;">2022-09-13</div>
<div class="t " style="left:710px;top:597.85px;height:20px;line-height:20px;font-size:14px;color:#333;font-weight:normal;">000004</div>
<div class="t " style="left:886px;top:597.35px;height:20px;line-height:20px;font-size:13px;color:#333;font-weight:normal;text-decoration:underline;">测试001</div>
<div class="t " style="left:1062px;top:597.85px;height:20px;line-height:20px;font-size:13px;color:#333;font-weight:normal;">未分类</div>
<svg class="a" style="left:1177.7px;top:599.65px" width="13.2" height="13.2" viewBox="0 0 13.2 13.2"><circle cx="6.6" cy="6.6" r="6.6" fill="#ff0000"/><path d="M9.6 2.6L3.2 7.3H6.2L4.5 10.8L10.4 5.9H7.4Z" fill="#fff"/></svg>
<div class="t " style="left:1196px;top:597.85px;height:20px;line-height:20px;font-size:13px;color:#ff0000;font-weight:normal;">第1阶段...</div>
<div class="t " style="left:1392px;top:597.85px;height:20px;line-height:20px;font-size:13px;color:#333;font-weight:normal;">管理部</div>
<div class="t " style="left:1612px;top:597.85px;height:20px;line-height:20px;font-size:14px;color:#333;font-weight:normal;">2022-09-13</div>
<div class="t" style="left:1743px;top:597.85px;width:21px;overflow:hidden;height:20px;line-height:20px;font-size:14px;color:#333">2022</div>
<div class="a" style="left:1794px;top:597.15px;width:21.7px;height:21.7px;border-radius:50%;background:#e6eaf5"></div>
<svg class="a" style="left:1798.6px;top:601.85px" width="12.5" height="12.5" viewBox="0 0 12.5 12.5"><path d="M5.8 1.3H2.4A1.3 1.3 0 0 0 1.1 2.6V10.3A1.3 1.3 0 0 0 2.4 11.6H10.1A1.3 1.3 0 0 0 11.4 10.3V6.8" fill="none" stroke="#c6c9d3" stroke-width="1.25"/><path d="M9.9 0.7L11.6 2.1L6.1 9.1L4.2 10.1L4.5 8Z" fill="none" stroke="#c6c9d3" stroke-width="1.05" stroke-linejoin="round"/></svg>
<svg class="a" style="left:1829.5px;top:602.15px" width="12" height="12" viewBox="0 0 12 12"><rect x="0.55" y="0.55" width="3.6" height="3.9" rx="1.4" fill="none" stroke="#333" stroke-width="1.1"/><rect x="7.05" y="0.55" width="3.6" height="3.9" rx="1.4" fill="none" stroke="#333" stroke-width="1.1"/><rect x="0.55" y="7.15" width="3.6" height="3.9" rx="1.4" fill="none" stroke="#333" stroke-width="1.1"/><rect x="7.05" y="7.15" width="3.6" height="3.9" rx="1.4" fill="none" stroke="#333" stroke-width="1.1"/></svg>
<div class="a" style="left:1764px;top:624px;width:111px;height:35px;background:#ffffff"></div>
<div class="a" style="left:1764px;top:658px;width:111px;height:1px;background:#e6e6e9"></div>
<div class="t " style="left:385px;top:633.1px;height:20px;line-height:20px;font-size:14px;color:#333;font-weight:normal;">7</div>
<div class="a" style="left:442px;top:633px;width:15px;height:15px;box-sizing:border-box;border:1px solid #c8c8c8;border-radius:3px;background:#fff"></div>
<div class="t " style="left:490px;top:633.1px;height:20px;line-height:20px;font-size:13px;color:#333;font-weight:normal;">已生效</div>
<div class="t " style="left:600px;top:633.1px;height:20px;line-height:20px;font-size:14px;color:#333;font-weight:normal;">2022-07-27</div>
<div class="t " style="left:710px;top:633.1px;height:20px;line-height:20px;font-size:14px;color:#333;font-weight:normal;">000003</div>
<div class="t " style="left:886px;top:632.6px;height:20px;line-height:20px;font-size:13px;color:#333;font-weight:normal;text-decoration:underline;">预算项目1</div>
<div class="t " style="left:1062px;top:633.1px;height:20px;line-height:20px;font-size:13px;color:#333;font-weight:normal;">未分类</div>
<svg class="a" style="left:1177.7px;top:634.9px" width="13.2" height="13.2" viewBox="0 0 13.2 13.2"><circle cx="6.6" cy="6.6" r="6.6" fill="#ff0000"/><path d="M9.6 2.6L3.2 7.3H6.2L4.5 10.8L10.4 5.9H7.4Z" fill="#fff"/></svg>
<div class="t " style="left:1196px;top:633.1px;height:20px;line-height:20px;font-size:13px;color:#ff0000;font-weight:normal;">第1阶段...</div>
<div class="t " style="left:1392px;top:633.1px;height:20px;line-height:20px;font-size:13px;color:#333;font-weight:normal;">总 部</div>
<div class="t " style="left:1612px;top:633.1px;height:20px;line-height:20px;font-size:14px;color:#333;font-weight:normal;">2022-07-01</div>
<div class="t" style="left:1743px;top:633.1px;width:21px;overflow:hidden;height:20px;line-height:20px;font-size:14px;color:#333">2022</div>
<div class="a" style="left:1794px;top:632.4px;width:21.7px;height:21.7px;border-radius:50%;background:#e6eaf5"></div>
<svg class="a" style="left:1798.6px;top:637.1px" width="12.5" height="12.5" viewBox="0 0 12.5 12.5"><path d="M5.8 1.3H2.4A1.3 1.3 0 0 0 1.1 2.6V10.3A1.3 1.3 0 0 0 2.4 11.6H10.1A1.3 1.3 0 0 0 11.4 10.3V6.8" fill="none" stroke="#c6c9d3" stroke-width="1.25"/><path d="M9.9 0.7L11.6 2.1L6.1 9.1L4.2 10.1L4.5 8Z" fill="none" stroke="#c6c9d3" stroke-width="1.05" stroke-linejoin="round"/></svg>
<svg class="a" style="left:1829.5px;top:637.4px" width="12" height="12" viewBox="0 0 12 12"><rect x="0.55" y="0.55" width="3.6" height="3.9" rx="1.4" fill="none" stroke="#333" stroke-width="1.1"/><rect x="7.05" y="0.55" width="3.6" height="3.9" rx="1.4" fill="none" stroke="#333" stroke-width="1.1"/><rect x="0.55" y="7.15" width="3.6" height="3.9" rx="1.4" fill="none" stroke="#333" stroke-width="1.1"/><rect x="7.05" y="7.15" width="3.6" height="3.9" rx="1.4" fill="none" stroke="#333" stroke-width="1.1"/></svg>
<div class="a" style="left:1764px;top:659px;width:111px;height:36px;background:#f0f1f7"></div>
<div class="a" style="left:1764px;top:694px;width:111px;height:1px;background:#e6e6e9"></div>
<div class="t " style="left:385px;top:668.35px;height:20px;line-height:20px;font-size:14px;color:#333;font-weight:normal;">8</div>
<div class="a" style="left:442px;top:668px;width:15px;height:15px;box-sizing:border-box;border:1px solid #c8c8c8;border-radius:3px;background:#fff"></div>
<div class="t " style="left:490px;top:668.35px;height:20px;line-height:20px;font-size:13px;color:#333;font-weight:normal;">已生效</div>
<div class="t " style="left:600px;top:668.35px;height:20px;line-height:20px;font-size:14px;color:#333;font-weight:normal;">2022-07-25</div>
<div class="t " style="left:710px;top:668.35px;height:20px;line-height:20px;font-size:14px;color:#333;font-weight:normal;">000002</div>
<div class="t " style="left:886px;top:667.85px;height:20px;line-height:20px;font-size:13px;color:#333;font-weight:normal;text-decoration:underline;">7月项目</div>
<div class="t " style="left:1062px;top:668.35px;height:20px;line-height:20px;font-size:13px;color:#333;font-weight:normal;">未分类</div>
<svg class="a" style="left:1177.7px;top:670.15px" width="13.2" height="13.2" viewBox="0 0 13.2 13.2"><circle cx="6.6" cy="6.6" r="6.6" fill="#ff0000"/><path d="M9.6 2.6L3.2 7.3H6.2L4.5 10.8L10.4 5.9H7.4Z" fill="#fff"/></svg>
<div class="t " style="left:1196px;top:668.35px;height:20px;line-height:20px;font-size:13px;color:#ff0000;font-weight:normal;">第1阶段...</div>
<div class="t " style="left:1392px;top:668.35px;height:20px;line-height:20px;font-size:13px;color:#333;font-weight:normal;">总 部</div>
<div class="t " style="left:1612px;top:668.35px;height:20px;line-height:20px;font-size:14px;color:#333;font-weight:normal;">2022-07-25</div>
<div class="t" style="left:1743px;top:668.35px;width:21px;overflow:hidden;height:20px;line-height:20px;font-size:14px;color:#333">2022</div>
<div class="a" style="left:1794px;top:667.65px;width:21.7px;height:21.7px;border-radius:50%;background:#e6eaf5"></div>
<svg class="a" style="left:1798.6px;top:672.35px" width="12.5" height="12.5" viewBox="0 0 12.5 12.5"><path d="M5.8 1.3H2.4A1.3 1.3 0 0 0 1.1 2.6V10.3A1.3 1.3 0 0 0 2.4 11.6H10.1A1.3 1.3 0 0 0 11.4 10.3V6.8" fill="none" stroke="#c6c9d3" stroke-width="1.25"/><path d="M9.9 0.7L11.6 2.1L6.1 9.1L4.2 10.1L4.5 8Z" fill="none" stroke="#c6c9d3" stroke-width="1.05" stroke-linejoin="round"/></svg>
<svg class="a" style="left:1829.5px;top:672.65px" width="12" height="12" viewBox="0 0 12 12"><rect x="0.55" y="0.55" width="3.6" height="3.9" rx="1.4" fill="none" stroke="#333" stroke-width="1.1"/><rect x="7.05" y="0.55" width="3.6" height="3.9" rx="1.4" fill="none" stroke="#333" stroke-width="1.1"/><rect x="0.55" y="7.15" width="3.6" height="3.9" rx="1.4" fill="none" stroke="#333" stroke-width="1.1"/><rect x="7.05" y="7.15" width="3.6" height="3.9" rx="1.4" fill="none" stroke="#333" stroke-width="1.1"/></svg>
<div class="a" style="left:1764px;top:695px;width:111px;height:35px;background:#ffffff"></div>
<div class="a" style="left:1764px;top:729px;width:111px;height:1px;background:#e6e6e9"></div>
<div class="t " style="left:385px;top:703.6px;height:20px;line-height:20px;font-size:14px;color:#333;font-weight:normal;">9</div>
<div class="a" style="left:442px;top:703px;width:15px;height:15px;box-sizing:border-box;border:1px solid #c8c8c8;border-radius:3px;background:#fff"></div>
<div class="t " style="left:490px;top:703.6px;height:20px;line-height:20px;font-size:13px;color:#333;font-weight:normal;">未生效</div>
<div class="t " style="left:600px;top:703.6px;height:20px;line-height:20px;font-size:14px;color:#333;font-weight:normal;">2022-07-21</div>
<div class="t " style="left:710px;top:703.6px;height:20px;line-height:20px;font-size:14px;color:#333;font-weight:normal;">000001</div>
<div class="t " style="left:886px;top:703.1px;height:20px;line-height:20px;font-size:13px;color:#333;font-weight:normal;text-decoration:underline;">202207项目</div>
<div class="t " style="left:1062px;top:703.6px;height:20px;line-height:20px;font-size:13px;color:#333;font-weight:normal;">未分类</div>
<svg class="a" style="left:1177.7px;top:705.4px" width="13.2" height="13.2" viewBox="0 0 13.2 13.2"><circle cx="6.6" cy="6.6" r="6.6" fill="#ff0000"/><path d="M9.6 2.6L3.2 7.3H6.2L4.5 10.8L10.4 5.9H7.4Z" fill="#fff"/></svg>
<div class="t " style="left:1196px;top:703.6px;height:20px;line-height:20px;font-size:13px;color:#ff0000;font-weight:normal;">第1阶段...</div>
<div class="t " style="left:1392px;top:703.6px;height:20px;line-height:20px;font-size:13px;color:#333;font-weight:normal;">总 部</div>
<div class="t " style="left:1612px;top:703.6px;height:20px;line-height:20px;font-size:14px;color:#333;font-weight:normal;">2022-07-21</div>
<div class="t" style="left:1743px;top:703.6px;width:21px;overflow:hidden;height:20px;line-height:20px;font-size:14px;color:#333">2022</div>
<svg class="a" style="left:1798.6px;top:707.6px" width="12.5" height="12.5" viewBox="0 0 12.5 12.5"><path d="M5.8 1.3H2.4A1.3 1.3 0 0 0 1.1 2.6V10.3A1.3 1.3 0 0 0 2.4 11.6H10.1A1.3 1.3 0 0 0 11.4 10.3V6.8" fill="none" stroke="#333" stroke-width="1.25"/><path d="M9.9 0.7L11.6 2.1L6.1 9.1L4.2 10.1L4.5 8Z" fill="none" stroke="#333" stroke-width="1.05" stroke-linejoin="round"/></svg>
<svg class="a" style="left:1829.5px;top:707.9px" width="12" height="12" viewBox="0 0 12 12"><rect x="0.55" y="0.55" width="3.6" height="3.9" rx="1.4" fill="none" stroke="#333" stroke-width="1.1"/><rect x="7.05" y="0.55" width="3.6" height="3.9" rx="1.4" fill="none" stroke="#333" stroke-width="1.1"/><rect x="0.55" y="7.15" width="3.6" height="3.9" rx="1.4" fill="none" stroke="#333" stroke-width="1.1"/><rect x="7.05" y="7.15" width="3.6" height="3.9" rx="1.4" fill="none" stroke="#333" stroke-width="1.1"/></svg>
<div class="a" style="left:876px;top:425px;width:12px;height:12px;background:#f2f2f2"></div>
<div class="a" style="left:888px;top:425px;width:12px;height:12px;background:#cfcfcf"></div>
<div class="a" style="left:900px;top:425px;width:12px;height:12px;background:#bcbcbc"></div>
<div class="a" style="left:912px;top:425px;width:12px;height:12px;background:#b3b3b3"></div>
<div class="a" style="left:924px;top:425px;width:12px;height:12px;background:#b6b6b6"></div>
<div class="a" style="left:936px;top:425px;width:12px;height:12px;background:#b4b4b4"></div>
<div class="a" style="left:948px;top:425px;width:12px;height:12px;background:#c4c4c4"></div>
<div class="a" style="left:960px;top:425px;width:12px;height:12px;background:#c2c2c2"></div>
<div class="a" style="left:972px;top:425px;width:12px;height:12px;background:#a9a9a9"></div>
<div class="a" style="left:984px;top:425px;width:12px;height:12px;background:#b7b7b7"></div>
<div class="a" style="left:996px;top:425px;width:12px;height:12px;background:#b8b8b8"></div>
<div class="a" style="left:1008px;top:425px;width:12px;height:12px;background:#c8c8c8"></div>
<div class="a" style="left:1020px;top:425px;width:12px;height:12px;background:#cecece"></div>
<div class="a" style="left:1032px;top:425px;width:12px;height:12px;background:#b3b3b3"></div>
<div class="a" style="left:1044px;top:425px;width:12px;height:12px;background:#ededed"></div>
<div class="a" style="left:1056px;top:425px;width:12px;height:12px;background:#eaeaea"></div>
<div class="a" style="left:1068px;top:425px;width:12px;height:12px;background:#c4c4c4"></div>
<div class="a" style="left:1080px;top:425px;width:12px;height:12px;background:#cfcfcf"></div>
<div class="a" style="left:1092px;top:425px;width:12px;height:12px;background:#c6c6c6"></div>
<div class="a" style="left:871px;top:437px;width:240px;height:10px;background:#e9eae9;border-radius:0 0 40px 120px / 0 0 10px 10px"></div>
<div class="a" style="left:1032px;top:437px;width:80px;height:10px;background:#f5f6f5;border-radius:0 0 30px 0 / 0 0 10px 0"></div>
<div class="a" style="left:1056px;top:461px;width:12px;height:12px;background:#d8d8dc"></div>
<div class="a" style="left:1068px;top:461px;width:12px;height:12px;background:#b8b8bc"></div>
<div class="a" style="left:1080px;top:461px;width:12px;height:12px;background:#b0b0b4"></div>
<div class="a" style="left:1092px;top:461px;width:12px;height:12px;background:#b2b2b6"></div>
<div class="a" style="left:1104px;top:461px;width:12px;height:12px;background:#bcbcc0"></div>
<div class="a" style="left:1116px;top:461px;width:12px;height:12px;background:#a8a8ac"></div>
<div class="a" style="left:1128px;top:461px;width:12px;height:12px;background:#b8b8bc"></div>
<div class="a" style="left:1140px;top:461px;width:12px;height:12px;background:#ececf0"></div>
<div class="a" style="left:1500px;top:486px;width:12px;height:11px;background:#f7f7f7"></div>
<div class="a" style="left:1512px;top:486px;width:12px;height:11px;background:#fafafa"></div>
<div class="a" style="left:1524px;top:486px;width:12px;height:11px;background:#fdfdfd"></div>
<div class="a" style="left:1500px;top:497px;width:12px;height:12px;background:#cbcbcb"></div>
<div class="a" style="left:1512px;top:497px;width:12px;height:12px;background:#bbbbbb"></div>
<div class="a" style="left:1524px;top:497px;width:12px;height:12px;background:#dadada"></div>
<div class="a" style="left:1508px;top:509px;width:46px;height:12px;background:#f9f9fa;border-radius:0 0 12px 12px"></div>
<div class="a" style="left:1757px;top:378px;width:7px;height:483px;background:linear-gradient(90deg,rgba(0,0,0,0),rgba(0,0,0,0.05))"></div>
<div class="a" style="left:357px;top:861px;width:1518px;height:1px;background:#e0e0e0"></div>
<div class="a" style="left:357px;top:876px;width:1518px;height:1.2px;background:#d8d8d8"></div>
<div class="a" style="left:357px;top:862px;width:1518px;height:14px;background:linear-gradient(#ffffff,#f6f6f6)"></div>
<div class="a" style="left:475px;top:862px;width:1px;height:14px;background:#e0e0e0"></div>
<div class="a" style="left:1765px;top:862px;width:1px;height:14px;background:#e0e0e0"></div>
<div class="a" style="left:478px;top:865px;width:856px;height:10px;border-radius:5px;background:#b3b3b3"></div>
<div class="t " style="left:1308px;top:892.0px;height:20px;line-height:20px;font-size:13px;color:#333;font-weight:normal;">每页显示</div>
<div class="a" style="left:1370px;top:884px;width:66px;height:35px;box-sizing:border-box;border:1px solid #dcdcdc;border-radius:3px;background:#fff"></div>
<div class="t " style="left:1380px;top:893.0px;height:20px;line-height:20px;font-size:15px;color:#333;font-weight:normal;">50</div>
<svg class="a" style="left:1414px;top:896px" width="14" height="9" viewBox="0 0 14 9"><path d="M1 1L7.0 8L13 1" fill="none" stroke="#333" stroke-width="1.3"/></svg>
<svg class="a" style="left:1466px;top:894px" width="12" height="16" viewBox="0 0 12 16"><path d="M1.5 1v14M10 1.5L3.5 8L10 14.5" fill="none" stroke="#b8b8b8" stroke-width="1.3"/></svg>
<svg class="a" style="left:1496px;top:894px" width="10" height="16" viewBox="0 0 10 16"><path d="M8.5 1.5L2 8L8.5 14.5" fill="none" stroke="#b8b8b8" stroke-width="1.3"/></svg>
<div class="t " style="left:1521px;top:892.0px;height:20px;line-height:20px;font-size:13px;color:#333;font-weight:normal;">第</div>
<div class="a" style="left:1544px;top:884px;width:66px;height:35px;box-sizing:border-box;border:1px solid #dcdcdc;border-radius:3px;background:#fff"></div>
<div class="t " style="left:1555px;top:892.5px;height:20px;line-height:20px;font-size:14px;color:#333;font-weight:normal;">1</div>
<div class="t " style="left:1619px;top:892.0px;height:20px;line-height:20px;font-size:13px;color:#333;font-weight:normal;">页</div>
<svg class="a" style="left:1648px;top:894px" width="10" height="16" viewBox="0 0 10 16"><path d="M1.5 1.5L8 8L1.5 14.5" fill="none" stroke="#b8b8b8" stroke-width="1.3"/></svg>
<svg class="a" style="left:1676px;top:894px" width="12" height="16" viewBox="0 0 12 16"><path d="M10.5 1v14M2 1.5L8.5 8L2 14.5" fill="none" stroke="#b8b8b8" stroke-width="1.3"/></svg>
<div class="t " style="left:1715px;top:892.0px;height:20px;line-height:20px;font-size:13px;color:#333;font-weight:normal;">共1页, 9条记录</div>
</body></html>
